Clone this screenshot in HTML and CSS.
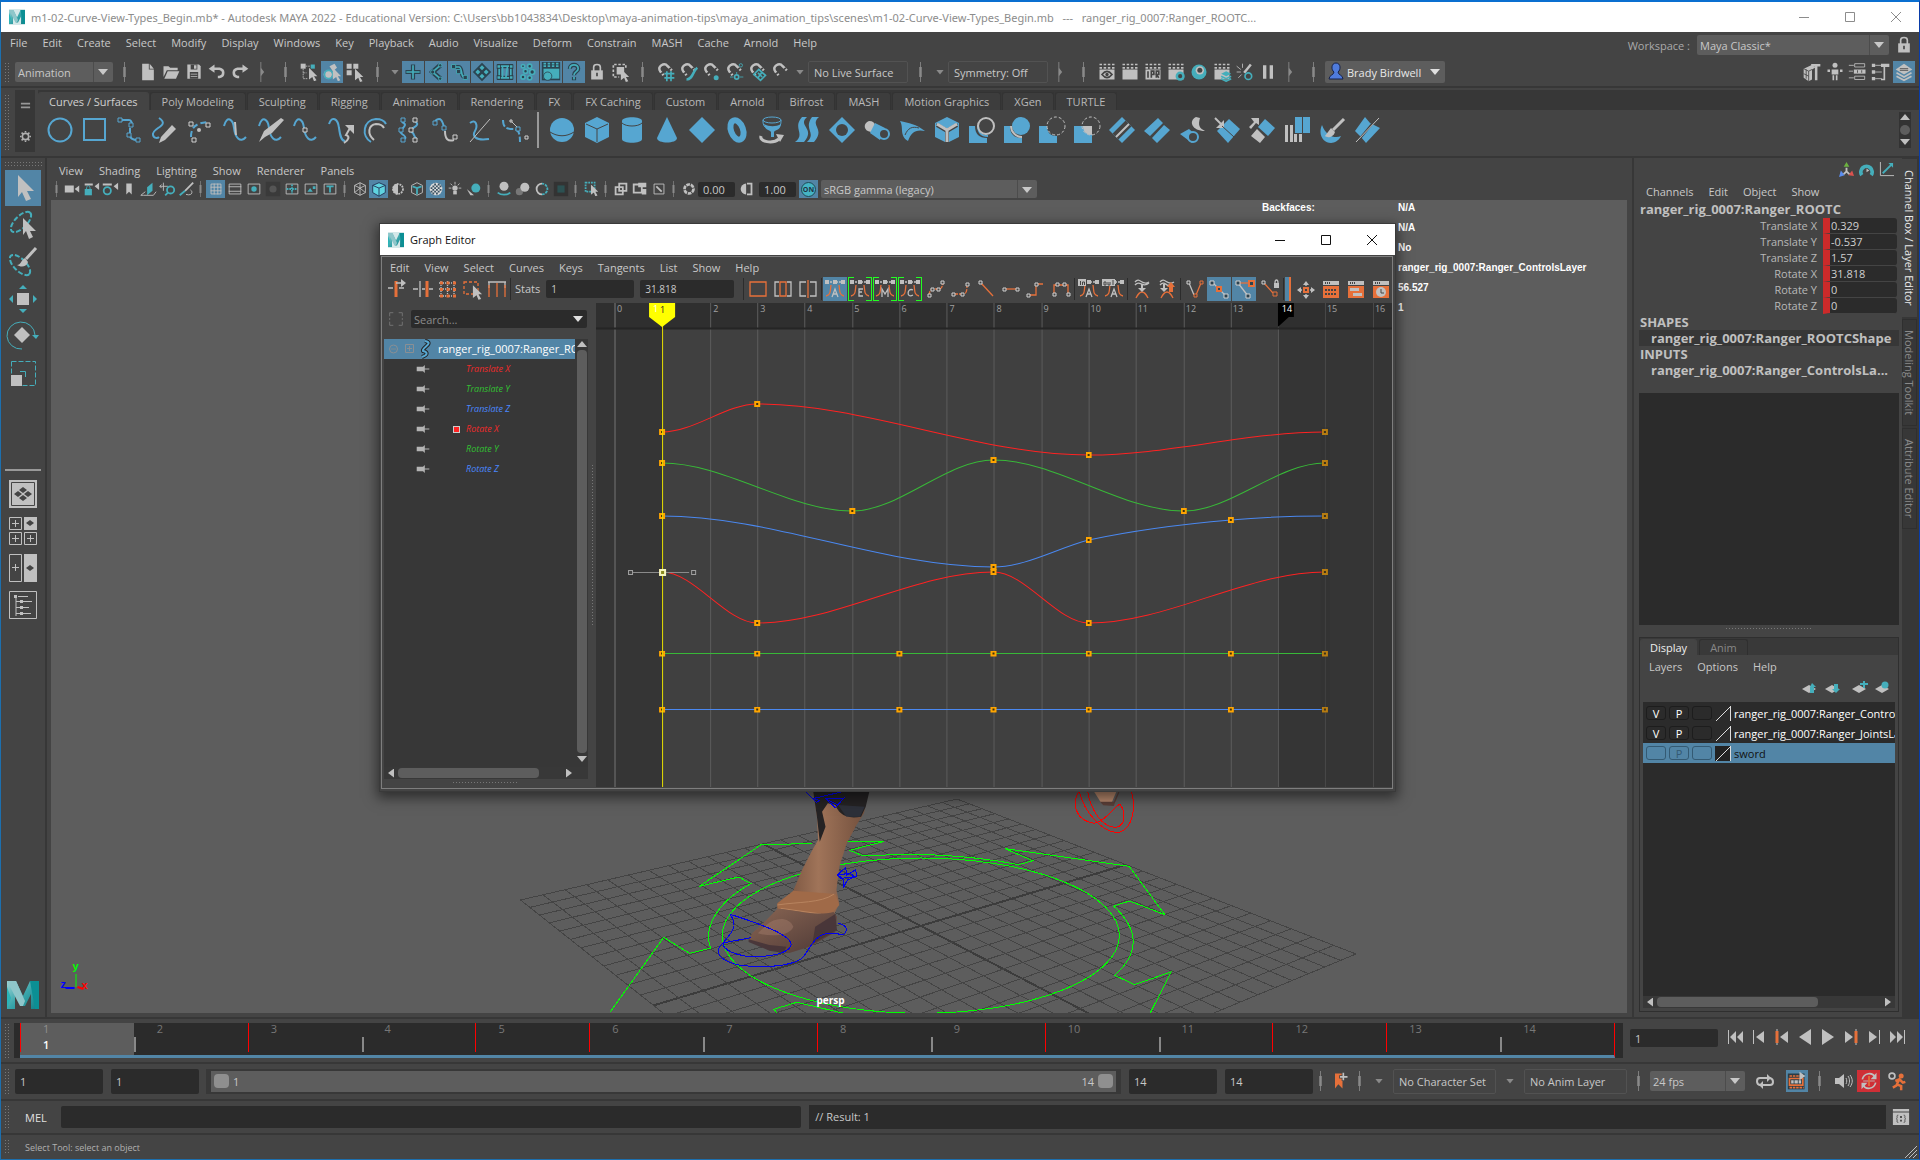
FILE: index.html
```html
<!DOCTYPE html>
<html lang="en">
<head>
<meta charset="utf-8">
<title>Autodesk MAYA 2022</title>
<link rel="stylesheet" href="styles.css">
</head>
<body>
<svg class="sprite" aria-hidden="true">
  <defs>
    <linearGradient id="mg" x1="0" y1="0" x2="1" y2="1"><stop offset="0" stop-color="#9fd3d6"/><stop offset=".5" stop-color="#3aa6ab"/><stop offset="1" stop-color="#0e7f86"/></linearGradient>
    <linearGradient id="skin" x1="0" y1="0" x2="1" y2="0"><stop offset="0" stop-color="#6d4a38"/><stop offset=".45" stop-color="#a07459"/><stop offset="1" stop-color="#6f4d3b"/></linearGradient>
    <linearGradient id="boot" x1="0" y1="0" x2="1" y2="1"><stop offset="0" stop-color="#8a6653"/><stop offset="1" stop-color="#4c3836"/></linearGradient>
    <marker id="key" markerWidth="7" markerHeight="7" refX="3" refY="3" markerUnits="userSpaceOnUse"><path d="M0 0h6v6H0z" fill="#ffa500"/><path d="M2 2h2v2H2z" fill="#3c3010"/></marker>
  </defs>
  <symbol id="maya" viewBox="0 0 32 32"><path d="M0 2h9l7 15 7-15h9v28h-8V15l-6 12h-4L8 15v15H0z" fill="url(#mg)"/><path d="M0 2h9l9 20-2 5h-3z" fill="#8fc6ca"/><path d="M23 2h9v28h-4z" fill="#0b8f94"/><path d="M0 8l4 11-4 11z" fill="#2ab4b8"/></symbol>
  <symbol id="sep" viewBox="0 0 8 24"><path d="M4 0v24" stroke="#8a8a8a"/><path d="M2.500 6h3v12h-3z" fill="#8a8a8a"/></symbol>
  <symbol id="sepa" viewBox="0 0 8 24"><path d="M2 0v24" stroke="#8a8a8a"/><path d="M2 7l4 5-4 5z" fill="#8a8a8a"/></symbol>
  <symbol id="new" viewBox="0 0 24 24"><path class="g" d="M5 2h8v7h6v13H5z"/><path class="g" d="M14 2l5 6h-5z"/></symbol>
  <symbol id="open" viewBox="0 0 24 24"><path class="g" d="M3 5h6l2 2h9v3H7l-4 8z"/><path class="g" d="M8 11h14l-4 9H4z"/></symbol>
  <symbol id="save" viewBox="0 0 24 24"><path class="g" d="M4 3h14l2 2v15H4z"/><path class="k" d="M8 3h8v6H8zM7 12h10v8H7z"/><path class="g" d="M12 4h3v4h-3zM8 14h8v1H8zM8 17h8v1H8z"/></symbol>
  <symbol id="undo" viewBox="0 0 24 24"><path class="gl w3" d="M7 8h8c6 1 6 9 0 10h-2"/><path class="g" d="M2 8l7-5v10z"/></symbol>
  <symbol id="redo" viewBox="0 0 24 24"><path class="gl w3" d="M17 8H9c-6 1-6 9 0 10h2"/><path class="g" d="M22 8l-7-5v10z"/></symbol>
  <symbol id="cur" viewBox="0 0 12 16"><path class="g" d="M1 0l10 10H7l3 5-3 1-2-5-4 3z"/></symbol>
  <symbol id="selh" viewBox="0 0 24 24"><path class="g" d="M2 2h6v6H2z"/><path class="gl th" d="M8 5h6M5 8v12h6M5 13h4" stroke-dasharray="2 1"/><path class="t" d="M14 3h5v5h-5z"/><use href="#cur" x="11" y="7" width="12" height="16"/></symbol>
  <symbol id="selo" viewBox="0 0 24 24"><circle class="g" cx="7" cy="15" r="5"/><path class="g" d="M9 5l6-3 3 5-5 4z"/><circle class="tl" cx="8" cy="15" r="5"/><use href="#cur" x="12" y="7" width="12" height="16"/></symbol>
  <symbol id="selc" viewBox="0 0 24 24"><path class="g" d="M2 2h6v6H2zM10 2h6v6h-6zM2 10h6v6H2z"/><use href="#cur" x="11" y="8" width="12" height="16"/></symbol>
  <symbol id="plus" viewBox="0 0 24 24"><path d="M12 3v18M3 12h18" fill="none" stroke="#2b4350" stroke-width="5"/><path class="tl" d="M12 4v16M4 12h16"/></symbol>
  <symbol id="joint" viewBox="0 0 24 24"><path d="M17 4L8 12l9 8" fill="none" stroke="#2b4350" stroke-width="6"/><path class="tl" d="M17 4L8 12l9 8"/><circle class="tl th dkf" cx="17" cy="4" r="2"/><circle class="tl th dkf" cx="8" cy="12" r="2.500"/><circle class="tl th dkf" cx="17" cy="20" r="2"/></symbol>
  <symbol id="crv" viewBox="0 0 24 24"><path d="M6 6h6c4 0 2 12 6 12" fill="none" stroke="#2b4350" stroke-width="5"/><path class="tl" d="M6 6h6c4 0 2 12 6 12"/><path class="tl th dkf" d="M3 3h5v5H3zM9 9h5v5H9zM17 16h5v5h-5z"/></symbol>
  <symbol id="surf" viewBox="0 0 24 24"><path fill="#2b4350" d="M12 1l11 11-11 11L1 12z"/><path class="t" d="M12 4l3 3-3 3-3-3zM7 9l3 3-3 3-3-3zM17 9l3 3-3 3-3-3zM12 14l3 3-3 3-3-3z"/></symbol>
  <symbol id="latt" viewBox="0 0 24 24"><path d="M5 5h14v14H5z" fill="none" stroke="#2b4350" stroke-width="5"/><path class="tl" d="M5 5h14v14H5zM9 5v14M15 5l-2 14"/><path class="dark" d="M2 3h5v5H2zM17 3h5v5h-5zM2 16h5v5H2zM17 16h5v5h-5z"/><path class="t" d="M3 4h3v3H3zM18 4h3v3h-3zM3 17h3v3H3zM18 17h3v3h-3z"/></symbol>
  <symbol id="dyn" viewBox="0 0 24 24"><g class="tl dkf"><circle cx="6" cy="5" r="2"/><circle cx="14" cy="5" r="2.500"/><circle cx="9" cy="11" r="2.500"/><circle cx="17" cy="12" r="3"/><circle cx="6" cy="18" r="2.500"/><circle cx="14" cy="19" r="2.500"/></g></symbol>
  <symbol id="clap" viewBox="0 0 24 24"><path fill="#2b4350" d="M1 0h22v22H1z"/><path class="t" d="M3 8h19v12H3z"/><path d="M3 5h19M3 2h19" class="tl" stroke-dasharray="3 2"/><circle cx="8" cy="17" r="5" fill="#45aebb" stroke="#2b4350"/></symbol>
  <symbol id="help" viewBox="0 0 24 24"><path d="M7 8c0-6 10-6 10 0 0 4-5 3-5 8M12 18v4" fill="none" stroke="#2b4350" stroke-width="5"/><path class="tl" d="M7 8c0-6 10-6 10 0 0 4-5 3-5 8M12 18v3"/></symbol>
  <symbol id="lock" viewBox="0 0 24 24"><path class="gl" d="M8 11V6c0-4 8-4 8 0v5"/><path class="g" d="M5 10h14v11H5z"/><path class="k" d="M11 13h2v4h-2z"/></symbol>
  <symbol id="box" viewBox="0 0 24 24"><path class="g" d="M8 6h9v9H8z"/><path class="gl" d="M5 3h14v4M4 4v14h7" stroke-dasharray="3 2"/><use href="#cur" x="12" y="8" width="12" height="16"/></symbol>
  <symbol id="mag" viewBox="0 0 24 24"><path class="gl w3" d="M9 16L5 11c-4-6 5-11 9-6l5 5"/><path class="kl" d="M5 15l4-3M14 10l4-3"/></symbol>
  <symbol id="mgrid" viewBox="0 0 24 24"><use href="#mag"/><path class="tl" d="M13 11v12M18 11v12M10 14h12M10 19h12"/></symbol>
  <symbol id="mcrv" viewBox="0 0 24 24"><use href="#mag"/><path class="tl w3" d="M9 21c8 0 7-10 13-14"/></symbol>
  <symbol id="mpt" viewBox="0 0 24 24"><use href="#mag"/><circle class="t" cx="17" cy="19" r="3"/></symbol>
  <symbol id="mproj" viewBox="0 0 24 24"><use href="#mag"/><circle class="tl" cx="14" cy="18" r="2.500"/><circle class="tl th" cx="19" cy="4" r="2"/><path class="tl th" d="M6 18h4M18 18h4M14 12v3"/></symbol>
  <symbol id="mpl" viewBox="0 0 24 24"><use href="#mag"/><path class="tl" d="M13 9l8 7-6 6-8-7zM12 13l5 5M17 12l-5 7"/></symbol>
  <symbol id="film" viewBox="0 0 24 24"><path class="g" d="M3 9h18v12H3z"/><path class="gl" d="M3 7h18M3 3h18" stroke-dasharray="3 2"/></symbol>
  <symbol id="rview" viewBox="0 0 24 24"><use href="#film"/><path class="kl" d="M6 15c4-5 8-5 12 0-4 5-8 5-12 0z"/><circle class="k" cx="12" cy="15" r="2"/></symbol>
  <symbol id="rgear" viewBox="0 0 24 24"><use href="#film"/><circle class="tl w3 kf" cx="17" cy="17" r="4"/></symbol>
  <symbol id="ripr" viewBox="0 0 24 24"><use href="#film"/><path class="kl" d="M6 11v8M10 19v-8h3v4h-3M16 19v-8h3v4h-3l3 4"/></symbol>
  <symbol id="hyp" viewBox="0 0 24 24"><circle class="t" cx="12" cy="12" r="9"/><circle class="g" cx="13" cy="10" r="5"/><circle class="k" cx="13" cy="10" r="3"/></symbol>
  <symbol id="rset" viewBox="0 0 24 24"><use href="#film"/><path class="t" d="M17 11l6 3-6 3-6-3z"/><path class="tl" d="M11 17l6 3 6-3M11 20l6 3 6-3"/></symbol>
  <symbol id="rlt" viewBox="0 0 24 24"><path class="gl w3" d="M11 13l8-10"/><path class="gl th" d="M2 5l5 4M9 2v5M2 12h5M4 19l4-4"/><circle class="tl" cx="16" cy="17" r="4"/></symbol>
  <symbol id="pause" viewBox="0 0 24 24"><path class="g" d="M6 4h4v16H6zM14 4h4v16h-4z"/></symbol>
  <symbol id="modk" viewBox="0 0 24 24"><path class="g" d="M2 8l9-4 6 2-5 3v12l-4 2-6-4z"/><path class="gl w3" d="M11 4h11M17 5v17"/><path class="kl th" d="M2 8l6 3v12M5 9v11M2 14l6 3M8 11l4-2"/></symbol>
  <symbol id="human" viewBox="0 0 24 24"><circle class="g" cx="12" cy="4" r="3"/><path class="g" d="M8 9h8v6H8zM3 9h3v3H3zM18 9h3v3h-3z"/><path class="gl" d="M10 16v6M14 16v6"/></symbol>
  <symbol id="aedit" viewBox="0 0 24 24"><path class="gl th" d="M1 4h6M1 11h5M1 19h6M8 2h12v4H8zM8 17h12v4H8z"/><path class="g" d="M7 9h14v5H7z"/><path class="k" d="M11 10h1v3h-1zM16 10h1v3h-1z"/></symbol>
  <symbol id="tset" viewBox="0 0 24 24"><path class="gl th" d="M5 4h8M5 12h8M5 20h8"/><path class="gl" d="M16 5v16h-4"/><path class="g" d="M1 2h4v4H1zM1 10h4v4H1zM1 18h4v4H1zM12 2h10v4H12z"/></symbol>
  <symbol id="layers" viewBox="0 0 24 24"><path class="gl" d="M3 17l9 5 9-5M3 13l9 5 9-5"/><path class="g" d="M12 2l10 7-10 6L2 9z"/><path class="kl th" d="M7 8h10M7 10h10"/></symbol>
  <symbol id="user" viewBox="0 0 16 20"><path d="M8 1c5 0 5 7 2 9 0 3 5 3 5 7H1c0-4 5-4 5-7-3-2-3-9 2-9z" fill="#4f7bdc" stroke="#16224a"/></symbol>
  <!-- shelf -->
  <symbol id="s-circ" viewBox="0 0 28 28"><circle class="bl" cx="14" cy="14" r="11.500"/></symbol>
  <symbol id="s-sq" viewBox="0 0 28 28"><path class="bl" d="M3 3h21v21H3z"/></symbol>
  <symbol id="s-cv" viewBox="0 0 28 28"><path class="bl" d="M5 4h8c2 0 3 3 3 6M14 12v7c0 4 4 5 8 5"/><path class="pt" d="M2 2h4v4H2zM13 7h4v4h-4zM11 17h4v4h-4zM20 22h4v4h-4z"/></symbol>
  <symbol id="s-pen" viewBox="0 0 28 28"><path class="bl" d="M8 2c12 8-8 10-6 17 1 4 5 3 6 2"/><path class="g" d="M21 9l4 4-11 11-6 3 2-6z"/></symbol>
  <symbol id="s-arc" viewBox="0 0 28 28"><path class="bl" d="M5 21C5 12 9 7 22 6" stroke-dasharray="6 3"/><path class="pg" d="M3 6h4v4H3zM20 7h4v4h-4zM6 22h4v4H6z"/><circle class="g" cx="13" cy="14" r="2"/></symbol>
  <symbol id="s-at" viewBox="0 0 28 28"><path class="bl" d="M3 10C6-1 12 3 13 12s6 16 12 9"/><path class="gl" d="M14 6l1 13"/></symbol>
  <symbol id="s-det" viewBox="0 0 28 28"><path class="bl" d="M3 10C6-1 12 3 13 12s6 16 12 9"/><path class="g" d="M25 2l3 2-12 13-7 4-6 5 5-11z"/></symbol>
  <symbol id="s-ins" viewBox="0 0 28 28"><path class="bl" d="M3 10C6-1 12 3 13 12s6 16 12 9"/><path class="pg" d="M12 12h4v4h-4z"/></symbol>
  <symbol id="s-ext" viewBox="0 0 28 28"><path class="bl" d="M3 8C6-1 12 3 13 12c1 7 2 13 6 13"/><path class="gl" d="M18 27c5-3 6-7 2-8l4-7"/><path class="g" d="M19 9h9v9z"/></symbol>
  <symbol id="s-off" viewBox="0 0 28 28"><path class="bl" d="M10 26C0 20 2 4 15 3c6 0 9 3 10 5"/><path class="gl" d="M13 24C6 18 7 9 15 8c5 0 7 2 8 4"/></symbol>
  <symbol id="s-reb" viewBox="0 0 28 28"><path class="bl" d="M6 6c9 4-6 8 0 12s3 5 0 6M17 4c13 7-9 8 0 13 2 4 2 5 4 6"/><path class="pt" d="M5 2h4v4H5zM3 12h4v4H3zM5 22h4v4H5z"/><path class="pg" d="M17 2h4v4h-4zM13 12h4v4h-4zM17 22h4v4h-4z"/></symbol>
  <symbol id="s-add" viewBox="0 0 28 28"><path class="bl" d="M4 5c7-6 8 3 10 9"/><path class="gl" d="M14 15c0 8 3 11 9 9"/><path class="pt" d="M2 5h4v4H2zM11 10h4v4h-4z"/><path class="pg" d="M22 19h4v4h-4z"/></symbol>
  <symbol id="s-cut" viewBox="0 0 28 28"><path class="bl" d="M4 7c6-5 8 3 5 8s0 10 14 8"/><path class="gl th" d="M24 3L4 26"/></symbol>
  <symbol id="s-bez" viewBox="0 0 28 28"><path class="bl" d="M2 4c0 8 4 9 11 9 5 0 6 6 6 13" stroke-dasharray="7 2"/><path class="pt" d="M15 11h4v4h-4z"/><path class="gl th" d="M11 6l5 5"/><path class="pg" d="M9 4h2v2H9zM24 20h3v3h-3z"/></symbol>
  <symbol id="s-sph" viewBox="0 0 28 28"><circle class="b" cx="14" cy="14" r="12"/><path class="kl th" d="M2 16c8 5 16 5 24 0"/></symbol>
  <symbol id="s-cube" viewBox="0 0 28 28"><path class="b" d="M14 1l12 6v14l-12 6-12-6V7z"/><path class="kl th" d="M3 8l11 5 11-5M14 13v13"/></symbol>
  <symbol id="s-cyl" viewBox="0 0 28 28"><path class="b" d="M4 5c0-5 20-5 20 0v18c0 5-20 5-20 0z"/><path class="kl th" d="M4 7c4 4 16 4 20 0"/></symbol>
  <symbol id="s-cone" viewBox="0 0 28 28"><path class="b" d="M14 1l10 21c0 6-20 6-20 0z"/></symbol>
  <symbol id="s-pl" viewBox="0 0 28 28"><path class="b" d="M14 1l13 13-13 13L1 14z"/></symbol>
  <symbol id="s-tor" viewBox="0 0 28 28"><ellipse cx="14" cy="14" rx="6" ry="10" transform="rotate(-20 14 14)" fill="none" stroke="#56a6d1" stroke-width="6"/></symbol>
  <symbol id="s-rev" viewBox="0 0 28 28"><path class="b" d="M6 8c1 7 5 5 7 8v5h3v-5c2-3 6-1 7-8-5 3-12 3-17 0z"/><ellipse cx="14" cy="4" rx="9" ry="3" fill="none" stroke="#56a6d1"/><path d="M5 4c0 3 0 5 2 7M23 4c0 3 0 5-2 7" fill="none" stroke="#56a6d1"/><path class="gl w3" d="M3 20c-2 6 12 8 18 3"/><path class="g" d="M18 18l8 1-4 7z"/></symbol>
  <symbol id="s-loft" viewBox="0 0 28 28"><path class="b" d="M9 1h5c-10 9 9 11-3 25H2C13 18-1 12 9 1zM19 1h7c-10 9 7 11-5 25h-7c10-9-4-13 5-25z"/></symbol>
  <symbol id="s-plan" viewBox="0 0 28 28"><path class="b" d="M14 1l13 13-13 13L1 14z"/><circle class="k" cx="14" cy="14" r="6"/></symbol>
  <symbol id="s-extr" viewBox="0 0 28 28"><path class="g" d="M6 5c8 0 7 7 2 11C0 15 0 7 6 5z"/><path class="b" d="M12 7l10 5-5 12-10-7z"/><circle class="bl kf" cx="21" cy="18" r="5"/></symbol>
  <symbol id="s-bir" viewBox="0 0 28 28"><path class="b" d="M2 5c9 2 16 3 25 10-10-2-14 2-17 10C1 20 6 11 2 5z"/><path class="kl th" d="M7 19c3-7 7-9 14-7"/></symbol>
  <symbol id="s-bnd" viewBox="0 0 28 28"><use href="#s-cube"/><path class="kl w4" d="M4 9l10 6 10-6M14 14v13"/><path class="gl w3" d="M4 8l10 6 10-6M14 14v12"/></symbol>
  <symbol id="s-prj" viewBox="0 0 28 28"><path class="b" d="M1 10h6c0 8 4 12 12 12v5H1z"/><path class="bl" d="M10 9c0 8 3 11 10 11"/><circle class="gl" cx="18" cy="10" r="8"/></symbol>
  <symbol id="s-int" viewBox="0 0 28 28"><path class="b" d="M1 10h6c0 8 4 12 12 12v5H1z"/><circle class="b" cx="18" cy="10" r="9"/><path class="gl" d="M8 10c0 6 5 11 11 11"/></symbol>
  <symbol id="s-trm" viewBox="0 0 28 28"><path class="b" d="M1 10h8c0 7 4 10 10 10v7H1z"/><circle class="gl th" cx="18" cy="10" r="9" stroke-dasharray="3 2"/></symbol>
  <symbol id="s-unt" viewBox="0 0 28 28"><path class="b" d="M1 10h18v17H1z"/><path class="g" d="M10 10h9v9c-6 0-9-4-9-9z"/><circle class="gl th" cx="18" cy="10" r="9" stroke-dasharray="3 2"/></symbol>
  <symbol id="s-sat" viewBox="0 0 28 28"><path class="b" d="M14 1l13 13-13 13L1 14z"/><path class="kl w4" d="M19 6L6 19M22 9L9 22"/><path class="gl" d="M21 8L8 21"/></symbol>
  <symbol id="s-sde" viewBox="0 0 28 28"><path class="b" d="M15 2l5 5L7 20l-6-5zM21 9l6 5-13 13-5-5z"/></symbol>
  <symbol id="s-oc" viewBox="0 0 28 28"><path class="g" d="M18 1c-8 4-4 14 9 14-6-3-7-6-5-13z"/><path class="b" d="M2 18l9-5 8 7-5 7z"/><circle class="bl kf" cx="15" cy="21" r="5"/></symbol>
  <symbol id="s-ext2" viewBox="0 0 28 28"><path class="b" d="M16 3l11 10-12 14L4 15z"/><path class="gl" d="M2 2l7 7"/><path class="g" d="M11 4v8H3z"/><path class="kl th" d="M9 10l12 11"/></symbol>
  <symbol id="s-sins" viewBox="0 0 28 28"><path class="b" d="M17 3l10 9-7 8-10-9z"/><path class="g" d="M9 13l8 8-5 6-9-7zM11 2v7l-3-2-5 6-2-2 5-5-3-4z"/></symbol>
  <symbol id="s-strip" viewBox="0 0 28 28"><path class="b" d="M12 1h7v16h-7zM20 1h7v16h-7z"/><path class="g" d="M2 9h3v17H2zM7 9h3v17H7zM11 18h3v8h-3zM16 18h3v8h-3z"/></symbol>
  <symbol id="s-scl" viewBox="0 0 28 28"><path class="b" d="M4 9c-7 16 12 25 19 11-6 3-15 0-19-11z"/><path class="gl w3" d="M26 3L15 14"/><path class="g" d="M13 12l4 4c-2 6-8 6-10 4z"/></symbol>
  <symbol id="s-sed" viewBox="0 0 28 28"><path class="b" d="M12 1l5 6 10 5-14 15-5-6-6-6z"/><path class="kl" d="M24 2L4 26"/><path class="gl th" d="M26 2L3 26"/></symbol>
  <!-- view panel -->
  <symbol id="p-cam" viewBox="0 0 20 20"><path class="g" d="M2 6h10v8H2zM13 10l5-4v8z"/></symbol>
  <symbol id="p-caml" viewBox="0 0 20 20"><path class="g" d="M3 4h9v2H3zM14 7l5-4v8z"/><path class="t" d="M3 10h8v7H3z"/><path class="tl th" d="M5 10c0-5 4-5 4 0"/></symbol>
  <symbol id="p-camg" viewBox="0 0 20 20"><path class="g" d="M2 4h10v2H2zM14 7l5-4v8z"/><circle class="tl" cx="7" cy="12" r="4"/></symbol>
  <symbol id="p-bm" viewBox="0 0 20 20"><path class="g" d="M7 4h6v12l-3-3-3 3z"/></symbol>
  <symbol id="p-img" viewBox="0 0 20 20"><path class="t" d="M9 8l6-5v9l-6 5z"/><path class="gl th" d="M2 17l5-4M5 17h11l3-4M2 17h3"/></symbol>
  <symbol id="p-pz" viewBox="0 0 20 20"><path class="gl th" d="M2 7h9M6 3v9M2 7l2-2M2 7l2 2"/><circle class="tl" cx="14" cy="11" r="4"/><path class="tl" d="M11 14l-3 3"/></symbol>
  <symbol id="p-gp" viewBox="0 0 20 20"><path class="gl" d="M18 3L9 12"/><path class="tl" d="M9 12l-6 5"/><path class="gl th" d="M10 16c7 2 8-3 5-5"/></symbol>
  <symbol id="p-grid" viewBox="0 0 20 20"><path class="gl th" d="M4.500 4.500h11v11h-11zM8 4v12M12 4v12M4 8h12M4 12h12"/></symbol>
  <symbol id="p-fg" viewBox="0 0 20 20"><path class="gl th" d="M3.500 4.500h13v11h-13zM3 7.500h14M3 12.500h14"/></symbol>
  <symbol id="p-rg" viewBox="0 0 20 20"><path class="gl th" d="M3.500 4.500h13v11h-13z"/><circle class="t" cx="10" cy="10" r="3"/></symbol>
  <symbol id="p-gm" viewBox="0 0 20 20"><path fill="#3a3a3a" d="M2 2h16v16H2z"/><circle cx="10" cy="10" r="4" fill="#555"/></symbol>
  <symbol id="p-fc" viewBox="0 0 20 20"><path class="gl th" d="M3.500 4.500h13v11h-13z"/><path class="tl" d="M10 5v10M4 10h12" stroke-dasharray="2 1"/></symbol>
  <symbol id="p-sa" viewBox="0 0 20 20"><path class="gl th" d="M3.500 4.500h13v11h-13z"/><path class="t" d="M6 13l3-4 3 4zM12 7h3v3h-3z"/></symbol>
  <symbol id="p-st" viewBox="0 0 20 20"><path class="gl th" d="M3.500 4.500h13v11h-13z"/><path class="tl" d="M6 7h8M10 7v7"/></symbol>
  <symbol id="p-wf" viewBox="0 0 20 20"><path class="gl th" d="M10 3l6 3v8l-6 3-6-3V6zM4 6l6 3 6-3M10 9v8M10 3v6M4 14l6-5 6 5"/></symbol>
  <symbol id="p-sh" viewBox="0 0 20 20"><path fill="#5fd3e0" stroke="#235" d="M10 3l7 3v8l-7 4-7-4V6z"/><path stroke="#235" fill="none" d="M3 6l7 3 7-3M10 9v9"/></symbol>
  <symbol id="p-half" viewBox="0 0 20 20"><path class="g" d="M10 4a6 6 0 0 0 0 12z"/><circle class="gl" cx="10" cy="10" r="5.500" stroke-dasharray="2 1"/></symbol>
  <symbol id="p-tx" viewBox="0 0 20 20"><path class="gl th" d="M10 3l6 3v8l-6 3-6-3V6z"/><path class="tl" d="M5 7l5 2 5-2M10 9v7"/></symbol>
  <symbol id="p-chk" viewBox="0 0 20 20"><circle cx="10" cy="10" r="7" fill="#dcdcdc"/><path d="M8 4h2v2H8zM12 4h2v2h-2zM6 6h2v2H6zM10 6h2v2h-2zM14 6h2v2h-2zM4 8h2v2H4zM8 8h2v2H8zM12 8h2v2h-2zM6 10h2v2H6zM10 10h2v2h-2zM14 10h2v2h-2zM4 12h2v2H4zM8 12h2v2H8zM12 12h2v2h-2zM6 14h2v2H6zM10 14h2v2h-2z" fill="#3a5262"/></symbol>
  <symbol id="p-lt" viewBox="0 0 20 20"><circle class="g" cx="10" cy="9" r="3"/><path class="g" d="M8 12h4v4H8z"/><path class="gl th" d="M10 2v3M3 9h3M14 9h3M5 4l2 2M15 4l-2 2"/></symbol>
  <symbol id="p-shd" viewBox="0 0 20 20"><path class="g" d="M2 10l8 7H6z"/><circle class="t" cx="12" cy="9" r="5"/></symbol>
  <symbol id="p-ao" viewBox="0 0 20 20"><circle class="g" cx="10" cy="7" r="5"/><path class="tl" d="M3 14c4 3 10 3 14 0"/></symbol>
  <symbol id="p-mb" viewBox="0 0 20 20"><circle cx="6" cy="13" r="4" fill="#777"/><circle class="g" cx="12" cy="8" r="5"/></symbol>
  <symbol id="p-aa" viewBox="0 0 20 20"><path class="gl" d="M10 4a6 6 0 0 0 0 12"/><path class="tl" d="M10 16a6 6 0 0 0 0-12" stroke-dasharray="3 1"/></symbol>
  <symbol id="p-dof" viewBox="0 0 20 20"><path fill="#333" d="M2 2h16v16H2z"/><path fill="#2c5152" d="M6 6h8v8H6z"/></symbol>
  <symbol id="p-iso" viewBox="0 0 20 20"><path class="tl" d="M4 3h10v10H4z" stroke-dasharray="2 1"/><use href="#cur" x="9" y="5" width="10" height="13"/></symbol>
  <symbol id="p-c1" viewBox="0 0 20 20"><path class="gl" d="M4 8h8v8H4zM8 4h8v8H8z"/></symbol>
  <symbol id="p-c2" viewBox="0 0 20 20"><path class="gl" d="M3 5h9v9H3z"/><path class="g" d="M8 3h9v5H8zM12 10h5v6h-5z"/></symbol>
  <symbol id="p-c3" viewBox="0 0 20 20"><path class="gl th" d="M4.500 4.500h11v11h-11z"/><path class="gl" d="M7 7l6 6"/></symbol>
  <symbol id="p-ap" viewBox="0 0 20 20"><circle cx="10" cy="10" r="5" class="gl w3" stroke-dasharray="4 1"/></symbol>
  <symbol id="p-con" viewBox="0 0 20 20"><path class="g" d="M9 4a6 6 0 0 0 0 12z"/><path class="gl" d="M10 4h5v12h-5"/></symbol>
  <!-- tool box -->
  <symbol id="t-sel" viewBox="0 0 36 36"><path class="g" d="M13 5l16 16h-7l4 8-5 2-4-9-4 5z"/></symbol>
  <symbol id="t-las" viewBox="0 0 36 36"><ellipse class="tl" cx="16" cy="15" rx="13" ry="6" transform="rotate(-45 16 15)" stroke-dasharray="5 2"/><path class="g" d="M18 11l13 13h-6l3 6-4 2-3-8-3 4z"/></symbol>
  <symbol id="t-pnt" viewBox="0 0 36 36"><ellipse class="tl" cx="15" cy="21" rx="13" ry="6" transform="rotate(45 15 21)" stroke-dasharray="5 2"/><path class="gl w3" d="M31 4L21 15"/><path class="g" d="M20 14l3 4c-2 6-8 5-11 3 4 0 4-5 8-7z"/></symbol>
  <symbol id="t-mov" viewBox="0 0 36 36"><path class="g" d="M12 12h12v12H12z"/><path class="t" d="M18 4l4 4h-8zM18 32l4-4h-8zM4 18l4-4v8zM32 18l-4-4v8z"/></symbol>
  <symbol id="t-rot" viewBox="0 0 36 36"><path class="g" d="M17 9l8 8-8 8-8-8z"/><path fill="none" stroke="#45aebb" d="M17 31A14 13.500 0 1 1 30 17"/><path class="t" d="M27 17h7l-3 4z"/></symbol>
  <symbol id="t-scl" viewBox="0 0 36 36"><path fill="none" stroke="#45aebb" d="M6.500 6.500h24v24h-24z" stroke-dasharray="5 2"/><path class="g" d="M6 20h11v11H6z"/><path fill="none" stroke="#45aebb" d="M15 16.500h5.500V22"/></symbol>
  <symbol id="l-1" viewBox="0 0 28 28"><path class="g" d="M0 0h28v28H0z"/><path fill="none" stroke="#444" d="M2.500 2.500h23v23h-23z"/><path class="k" d="M14 7l4 3-4 3-4-3zM14 15l4 3-4 3-4-3zM9 11l4 3-4 3-4-3zM19 11l4 3-4 3-4-3z"/></symbol>
  <symbol id="l-2" viewBox="0 0 28 28"><path class="gl th" d="M.5.500h12v12H.500zM.5 15.500h12v12H.500zM15.500 15.500h12v12h-12zM6.500 3v7M3 6.500h7M6.500 18v7M3 21.500h7M21.500 18v7M18 21.500h7"/><path class="g" d="M15 0h13v13H15z"/><path class="k" d="M21 3l4 3-4 3-4-3z"/></symbol>
  <symbol id="l-3" viewBox="0 0 28 28"><path class="gl th" d="M.5.500h12v27H.500zM6.500 10v7M3 13.500h7"/><path class="g" d="M15 0h13v28H15z"/><path class="k" d="M21 11l4 3-4 3-4-3z"/></symbol>
  <symbol id="l-4" viewBox="0 0 28 28"><path class="gl th" d="M.5.500h27v27H.500zM9 5.500h10M7 6v19M7 10.500h16M7 16.500h13M7 22.500h15"/><path class="g" d="M5 4h3v3H5zM11 9h3v3h-3zM11 15h3v3h-3zM11 21h3v3h-3z"/></symbol>
  <!-- graph editor -->
  <symbol id="g-ins" viewBox="0 0 24 24"><path class="ol w3" d="M11 4v16"/><path class="gl" d="M3 11h5M14 11h5M11 6h7"/><path class="g" d="M16 2l5 4-5 4z"/></symbol>
  <symbol id="g-mov" viewBox="0 0 24 24"><path class="ol w3" d="M17 4v16"/><path class="gl" d="M10 4v16M3 12h5M12 12h3M19 12h4"/></symbol>
  <symbol id="g-lat" viewBox="0 0 24 24"><path class="gl th" d="M6 4v16M12.500 4v16M19 4v16M4 6h17M4 12h17M4 19h17" stroke-dasharray="1 1"/><path class="ol w3" d="M5 6h16M5 12.500h16M5 19h16" stroke-dasharray="3 3.500"/></symbol>
  <symbol id="g-reg" viewBox="0 0 24 24"><path class="ol" d="M4 5h14v12H4z" stroke-dasharray="3 2"/><use href="#cur" x="12" y="8" width="11" height="15"/></symbol>
  <symbol id="g-ret" viewBox="0 0 24 24"><path class="gl" d="M3 5h18M4 5v6M20 5v6"/><path class="ol" d="M4 8v12M12 6v14M20 8v12"/></symbol>
  <symbol id="g-fa" viewBox="0 0 24 24"><path class="ol" d="M4 5h16v14H4z"/></symbol>
  <symbol id="g-fp" viewBox="0 0 24 24"><path class="gl" d="M8 5H4v14h4M16 5h4v14h-4"/><path class="ol" d="M9 5h6v14H9z"/></symbol>
  <symbol id="g-cv" viewBox="0 0 24 24"><path class="gl" d="M10 5H4v14h6M14 5h6v14h-6"/><path class="ol" d="M12 3v18"/></symbol>
  <symbol id="g-tan" viewBox="0 0 24 24"><path class="gl th" d="M4 5h16" stroke-dasharray="2 1"/><path class="g" d="M2 3h4v4H2zM10 3h4v4h-4zM18 3h4v4h-4z"/><path class="ol" d="M8 8c-1 6 0 10-5 11M16 8c1 6 0 10 5 11"/></symbol>
  <symbol id="g-a" viewBox="0 0 24 24"><use href="#g-tan"/><path class="gl" d="M9 20l3-8 3 8M10 17h4"/></symbol>
  <symbol id="g-e" viewBox="0 0 24 24"><use href="#g-tan"/><path class="gl" d="M15 12h-4v7h4M11 15h3"/></symbol>
  <symbol id="g-m" viewBox="0 0 24 24"><use href="#g-tan"/><path class="gl" d="M9 20v-8l3 5 3-5v8"/></symbol>
  <symbol id="g-c" viewBox="0 0 24 24"><use href="#g-tan"/><path class="gl" d="M15 13c-6-3-7 9 0 5"/></symbol>
  <symbol id="g-t1" viewBox="0 0 24 24"><path class="ol" d="M5 18c1-6 3-7 7-6s6 0 7-6" stroke-dasharray="4 1"/><path class="pg" d="M4 17h3v3H4zM7 11h3v3H7zM13 11h3v3h-3zM17 4h3v3h-3z"/></symbol>
  <symbol id="g-t2" viewBox="0 0 24 24"><path class="ol" d="M4 17h10c4 0 4-4 4-10" stroke-dasharray="5 1"/><path class="pg" d="M3 16h3v3H3zM12 16h3v3h-3zM17 6h3v3h-3z"/></symbol>
  <symbol id="g-t3" viewBox="0 0 24 24"><path class="ol" d="M7 6l12 13"/><path class="pg" d="M5 4h3v3H5z"/></symbol>
  <symbol id="g-t4" viewBox="0 0 24 24"><path class="ol" d="M6 12h12"/><path class="pg" d="M4 11h3v3H4zM17 11h3v3h-3z"/></symbol>
  <symbol id="g-t5" viewBox="0 0 24 24"><path class="ol" d="M5 18h7V7h7"/><path class="pg" d="M3 17h3v3H3zM11 6h3v3h-3z"/></symbol>
  <symbol id="g-t6" viewBox="0 0 24 24"><path class="ol" d="M5 17V8h14v9"/><path class="pg" d="M4 16h3v3H4zM7 6h3v3H7zM14 6h3v3h-3zM18 16h3v3h-3z"/></symbol>
  <symbol id="g-in" viewBox="0 0 24 24"><use href="#g-a"/><path class="g" d="M1 2h8v7H1z"/><path class="kl th" d="M3.500 4v4M5.500 8V5h2v3"/></symbol>
  <symbol id="g-out" viewBox="0 0 24 24"><use href="#g-a"/><path class="g" d="M0 2h13v7H0z"/><path class="kl th" d="M2 5h2v3H2zM6 5v3h2V5M11 3v5"/></symbol>
  <symbol id="g-b1" viewBox="0 0 24 24"><path class="gl th" d="M5 5c5-6 7 5 14 0M5 8c5-6 7 4 14-2"/><path class="ol" d="M6 21c4-8 8-8 12 0"/><path class="g" d="M11 7h2v4h3l-4 4-4-4h3z"/></symbol>
  <symbol id="g-b2" viewBox="0 0 24 24"><path class="gl th" d="M5 5c5-6 7 5 14 0M5 8c5-6 7 4 10-1"/><path class="ol" d="M6 21c4-8 8-8 12 0"/><path class="g" d="M8 7h2v4h3l-4 4-4-4h3z"/><path class="o" d="M16 5l4 5h-2v5h-4v-5h-2z"/></symbol>
  <symbol id="g-bt" viewBox="0 0 24 24"><path class="gl" d="M6 6l5 12"/><path class="ol" d="M18 6l-5 12"/><path class="pg" d="M4 4h3v3H4z"/><path class="po th" d="M17 4h3v3h-3zM11 17h3v3h-3z"/></symbol>
  <symbol id="g-ut" viewBox="0 0 24 24"><path class="gl" d="M5 5l14 14"/><path class="pg dkf" d="M3 4h4v4H3zM17 17h4v4h-4z"/><path class="po dkf" d="M10 10h4v4h-4z"/></symbol>
  <symbol id="g-fw" viewBox="0 0 24 24"><path class="ol" d="M6 6h12"/><path class="gl" d="M6 6l10 13"/><path class="pg dkf" d="M4 4h4v4H4zM14 17h4v4h-4z"/><path class="po dkf" d="M17 4h5v5h-5z"/></symbol>
  <symbol id="g-lk" viewBox="0 0 24 24"><path class="ol" d="M6 6l9 10"/><path class="pg" d="M4 4h3v3H4z"/><path class="po th" d="M15 15h4v4h-4z"/><path class="g" d="M16 6h5v5h-5z"/><path class="gl th" d="M17 6c0-4 3-4 3 0"/></symbol>
  <symbol id="g-pan" viewBox="0 0 24 24"><path class="g" d="M12 4l3 4h-6zM12 22l3-4h-6zM3 13l4-3v6zM21 13l-4-3v6z"/><path class="gl" d="M12 7v2M12 17v2M6 13h2M16 13h2"/><path class="po" d="M10 11h4v4h-4z"/></symbol>
  <symbol id="g-w" viewBox="0 0 24 24"><path class="g" d="M4 4h16v4H4z"/><path class="o" d="M4 9h16v12H4z"/><path class="kl" d="M6 6h6" stroke-dasharray="1 1"/></symbol>
  <symbol id="g-w1" viewBox="0 0 24 24"><use href="#g-w"/><path class="kl" d="M6 13h12M6 17h12" stroke-dasharray="2 1"/></symbol>
  <symbol id="g-w2" viewBox="0 0 24 24"><use href="#g-w"/><path class="g" d="M6 11h9v3H6zM9 16h9v3H9z"/></symbol>
  <symbol id="g-w3" viewBox="0 0 24 24"><use href="#g-w"/><circle class="g" cx="12" cy="15" r="5"/><path class="kl th" d="M12 12v4h3"/></symbol>
  <symbol id="g-x" viewBox="0 0 20 20"><path fill="none" stroke="#777" d="M7 3H3v4M13 3h4v4M7 17H3v-4M13 17h4v-4M3 9v2M17 9v2"/></symbol>
  <symbol id="pin" viewBox="0 0 14 10"><path fill="#b4b4b4" d="M0 2h7l2-2v4h5v1H9v4L7 7H0z"/></symbol>
  <!-- transport -->
  <symbol id="k1" viewBox="0 0 18 18"><path class="gl th" d="M1.500 2v14"/><path class="g" d="M9 3v12L3 9zM16 3v12L10 9z"/></symbol>
  <symbol id="k2" viewBox="0 0 18 18"><path class="gl th" d="M3.500 2v14"/><path class="g" d="M14 3v12L6 9z"/></symbol>
  <symbol id="k3" viewBox="0 0 18 18"><path class="ol w3" d="M4 3v12"/><path class="gl th" d="M4 1v16" stroke-dasharray="2 12"/><path class="g" d="M15 3v12L7 9z"/></symbol>
  <symbol id="k4" viewBox="0 0 18 18"><path class="g" d="M15 1v16L3 9z"/></symbol>
  <symbol id="loop" viewBox="0 0 20 20"><path class="gl" d="M6 14h-1c-4-1-4-7 0-7h9M14 7h1c4 1 4 7 0 7H7"/><path class="g" d="M12 3l4 4-4 4zM8 10l-4 4 4 4z"/></symbol>
  <symbol id="pb" viewBox="0 0 24 24"><path class="dark" d="M1 3h20v19H1z"/><path class="ol" d="M3 6h17M3 20h17" stroke-dasharray="3 1"/><path class="ol" d="M3 9h16v8H3z"/><path class="g" d="M5 11h3v4H5zM9 11h4v4H9zM14 11h3v4h-3zM15 1l7 5-7 5z"/></symbol>
  <symbol id="snd" viewBox="0 0 20 20"><path class="g" d="M2 7h4l5-4v14l-5-4H2z"/><path class="gl th" d="M13 7c1 2 1 4 0 6M15 5c2 3 2 7 0 10M17 4c3 4 3 8 0 12"/></symbol>
  <symbol id="ak" viewBox="0 0 24 24"><path class="gl" d="M4 10C6 2 16 1 19 7M20 14C18 22 8 23 5 17"/><path class="g" d="M21 2v8h-7zM3 22v-8h7z"/><path class="gl th" d="M5 12h14"/><path class="ol" d="M12 6v12"/></symbol>
  <symbol id="run" viewBox="0 0 24 24"><circle class="gl" cx="6" cy="6" r="3.500"/><circle class="o" cx="17" cy="6" r="3"/><path class="ol w3" d="M10 12l5-2 4 4 3-1M14 11l-2 5 5 2v5M12 17l-5 3"/></symbol>
  <symbol id="bmk" viewBox="0 0 20 24"><path class="o" d="M4 3h9v18l-5-5-4 5z"/><path class="kl w4" d="M14 2v10M9 7h10"/><path class="gl" d="M14 2v9M10 7h9"/></symbol>
  <symbol id="scr" viewBox="0 0 20 20"><path class="g" d="M1 1h18v3H1zM1 5h18v14H1z"/><path class="kl th" d="M7 8c-3 0 0 3-2 4 2 1-1 4 2 4M13 8c3 0 0 3 2 4-2 1 1 4-2 4"/><path class="kl" d="M10 9v2M10 13v2"/></symbol>
  <symbol id="ly" viewBox="0 0 18 14"><path class="g" d="M1 8l7-4 7 4-7 4z"/></symbol>
</svg>

<div class="app">
  <header class="titlebar">
    <svg class="logo"><use href="#maya"/></svg>
    <span class="grow title">m1-02-Curve-View-Types_Begin.mb* - Autodesk MAYA 2022 - Educational Version: C:\Users\bb1043834\Desktop\maya-animation-tips\maya_animation_tips\scenes\m1-02-Curve-View-Types_Begin.mb&nbsp;&nbsp; ---&nbsp;&nbsp; ranger_rig_0007:Ranger_ROOTC...</span>
    <button class="wb" aria-label="Minimize"><svg viewBox="0 0 12 12"><path d="M1 6.500h10"/></svg></button>
    <button class="wb" aria-label="Maximize"><svg viewBox="0 0 12 12"><path d="M1.500 1.500h9v9h-9z"/></svg></button>
    <button class="wb" aria-label="Close"><svg viewBox="0 0 12 12"><path d="M1 1l10 10M11 1L1 11"/></svg></button>
  </header>

  <div class="menurow">
    <nav class="menu">
      <button>File</button><button>Edit</button><button>Create</button><button>Select</button><button>Modify</button><button>Display</button><button>Windows</button><button>Key</button><button>Playback</button><button>Audio</button><button>Visualize</button><button>Deform</button><button>Constrain</button><button>MASH</button><button>Cache</button><button>Arnold</button><button>Help</button>
    </nav>
    <label class="workspace">Workspace :
      <span class="sel wide"><select><option>Maya Classic*</option></select></span>
    </label>
    <button class="c23" aria-label="Lock workspace"><svg><use href="#lock"/></svg></button>
  </div>

  <div class="status">
    <span class="grip"></span>
    <span class="sel mode"><select aria-label="Menu set"><option>Animation</option></select></span>
    <svg class="sep"><use href="#sep"/></svg>
    <button class="c23" aria-label="New"><svg><use href="#new"/></svg></button>
    <button class="c23" aria-label="Open"><svg><use href="#open"/></svg></button>
    <button class="c23" aria-label="Save"><svg><use href="#save"/></svg></button>
    <button class="c23" aria-label="Undo"><svg><use href="#undo"/></svg></button>
    <button class="c23" aria-label="Redo"><svg><use href="#redo"/></svg></button>
    <svg class="sep"><use href="#sepa"/></svg>
    <svg class="sep"><use href="#sep"/></svg>
    <button class="c23" aria-label="Select hierarchy"><svg><use href="#selh"/></svg></button>
    <button class="c23 on" aria-label="Select object"><svg><use href="#selo"/></svg></button>
    <button class="c23" aria-label="Select component"><svg><use href="#selc"/></svg></button>
    <svg class="sep"><use href="#sep"/></svg>
    <i class="tri"></i>
    <button class="c23 on" aria-label="Handles"><svg><use href="#plus"/></svg></button>
    <button class="c23 on" aria-label="Joints"><svg><use href="#joint"/></svg></button>
    <button class="c23 on" aria-label="Curves"><svg><use href="#crv"/></svg></button>
    <button class="c23 on" aria-label="Surfaces"><svg><use href="#surf"/></svg></button>
    <button class="c23 on" aria-label="Deformations"><svg><use href="#latt"/></svg></button>
    <button class="c23 on" aria-label="Dynamics"><svg><use href="#dyn"/></svg></button>
    <button class="c23 on" aria-label="Rendering"><svg><use href="#clap"/></svg></button>
    <button class="c23 on" aria-label="Miscellaneous"><svg><use href="#help"/></svg></button>
    <button class="c23" aria-label="Lock selection"><svg><use href="#lock"/></svg></button>
    <button class="c23" aria-label="Highlight selection"><svg><use href="#box"/></svg></button>
    <svg class="sep"><use href="#sep"/></svg>
    <button class="c23" aria-label="Snap to grids"><svg><use href="#mgrid"/></svg></button>
    <button class="c23" aria-label="Snap to curves"><svg><use href="#mcrv"/></svg></button>
    <button class="c23" aria-label="Snap to points"><svg><use href="#mpt"/></svg></button>
    <button class="c23" aria-label="Snap to center"><svg><use href="#mproj"/></svg></button>
    <button class="c23" aria-label="Snap to planes"><svg><use href="#mpl"/></svg></button>
    <button class="c23" aria-label="Make live"><svg><use href="#mag"/></svg></button>
    <i class="tri w16"></i>
    <button class="field">No Live Surface</button>
    <svg class="sep"><use href="#sep"/></svg>
    <i class="tri w16"></i>
    <button class="field">Symmetry: Off</button>
    <svg class="sep"><use href="#sepa"/></svg>
    <svg class="sep"><use href="#sep"/></svg>
    <button class="c23" aria-label="Render view"><svg><use href="#rview"/></svg></button>
    <button class="c23" aria-label="Render"><svg><use href="#film"/></svg></button>
    <button class="c23" aria-label="IPR render"><svg><use href="#ripr"/></svg></button>
    <button class="c23" aria-label="Render settings"><svg><use href="#rgear"/></svg></button>
    <button class="c23" aria-label="Hypershade"><svg><use href="#hyp"/></svg></button>
    <button class="c23" aria-label="Render setup"><svg><use href="#rset"/></svg></button>
    <button class="c23" aria-label="Light editor"><svg><use href="#rlt"/></svg></button>
    <button class="c23" aria-label="Pause viewport"><svg><use href="#pause"/></svg></button>
    <svg class="sep"><use href="#sepa"/></svg>
    <svg class="sep"><use href="#sep"/></svg>
    <button class="account"><svg><use href="#user"/></svg><span class="grow">Brady Birdwell</span><i class="tri big"></i></button>
    <span class="grow"></span>
    <button class="c23" aria-label="Modeling toolkit"><svg><use href="#modk"/></svg></button>
    <button class="c23" aria-label="HumanIK"><svg><use href="#human"/></svg></button>
    <button class="c23" aria-label="Attribute editor"><svg><use href="#aedit"/></svg></button>
    <button class="c23" aria-label="Tool settings"><svg><use href="#tset"/></svg></button>
    <button class="c23 on" aria-label="Channel box"><svg><use href="#layers"/></svg></button>
  </div>

  <section class="shelf">
    <span class="grip"></span>
    <div class="shelf-side">
      <button aria-label="Shelf menu"><svg viewBox="0 0 12 8"><path fill="#999" d="M1 1h10v2H1zM1 5h10v2H1z"/></svg></button>
      <button aria-label="Shelf options"><svg viewBox="0 0 14 14"><circle fill="none" stroke="#b0b0b0" stroke-width="2" cx="7" cy="7" r="4"/><path stroke="#b0b0b0" stroke-width="2" d="M7 0v2M7 12v2M0 7h2M12 7h2M2 2l2 2M10 10l2 2M12 2l-2 2M4 10l-2 2"/></svg></button>
    </div>
    <div class="grow">
      <div class="tabs">
        <button class="cur">Curves / Surfaces</button><button>Poly Modeling</button><button>Sculpting</button><button>Rigging</button><button>Animation</button><button>Rendering</button><button>FX</button><button>FX Caching</button><button>Custom</button><button>Arnold</button><button>Bifrost</button><button>MASH</button><button>Motion Graphics</button><button>XGen</button><button>TURTLE</button>
      </div>
      <div class="shelf-icons">
        <button aria-label="NURBS circle"><svg><use href="#s-circ"/></svg></button>
        <button aria-label="NURBS square"><svg><use href="#s-sq"/></svg></button>
        <button aria-label="EP curve"><svg><use href="#s-cv"/></svg></button>
        <button aria-label="Pencil curve"><svg><use href="#s-pen"/></svg></button>
        <button aria-label="Three point arc"><svg><use href="#s-arc"/></svg></button>
        <button aria-label="Attach curves"><svg><use href="#s-at"/></svg></button>
        <button aria-label="Detach curves"><svg><use href="#s-det"/></svg></button>
        <button aria-label="Insert knot"><svg><use href="#s-ins"/></svg></button>
        <button aria-label="Extend curve"><svg><use href="#s-ext"/></svg></button>
        <button aria-label="Offset curve"><svg><use href="#s-off"/></svg></button>
        <button aria-label="Rebuild curve"><svg><use href="#s-reb"/></svg></button>
        <button aria-label="Add points"><svg><use href="#s-add"/></svg></button>
        <button aria-label="Cut curve"><svg><use href="#s-cut"/></svg></button>
        <button aria-label="Bezier curve"><svg><use href="#s-bez"/></svg></button>
        <i class="bar"></i>
        <button aria-label="Sphere"><svg><use href="#s-sph"/></svg></button>
        <button aria-label="Cube"><svg><use href="#s-cube"/></svg></button>
        <button aria-label="Cylinder"><svg><use href="#s-cyl"/></svg></button>
        <button aria-label="Cone"><svg><use href="#s-cone"/></svg></button>
        <button aria-label="Plane"><svg><use href="#s-pl"/></svg></button>
        <button aria-label="Torus"><svg><use href="#s-tor"/></svg></button>
        <button aria-label="Revolve"><svg><use href="#s-rev"/></svg></button>
        <button aria-label="Loft"><svg><use href="#s-loft"/></svg></button>
        <button aria-label="Planar"><svg><use href="#s-plan"/></svg></button>
        <button aria-label="Extrude"><svg><use href="#s-extr"/></svg></button>
        <button aria-label="Birail"><svg><use href="#s-bir"/></svg></button>
        <button aria-label="Boundary"><svg><use href="#s-bnd"/></svg></button>
        <button aria-label="Project curve"><svg><use href="#s-prj"/></svg></button>
        <button aria-label="Intersect"><svg><use href="#s-int"/></svg></button>
        <button aria-label="Trim"><svg><use href="#s-trm"/></svg></button>
        <button aria-label="Untrim"><svg><use href="#s-unt"/></svg></button>
        <button aria-label="Attach surfaces"><svg><use href="#s-sat"/></svg></button>
        <button aria-label="Detach surfaces"><svg><use href="#s-sde"/></svg></button>
        <button aria-label="Open or close"><svg><use href="#s-oc"/></svg></button>
        <button aria-label="Insert isoparms"><svg><use href="#s-ext2"/></svg></button>
        <button aria-label="Extend surface"><svg><use href="#s-sins"/></svg></button>
        <button aria-label="Rebuild surface"><svg><use href="#s-strip"/></svg></button>
        <button aria-label="Sculpt surface"><svg><use href="#s-scl"/></svg></button>
        <button aria-label="Surface editing"><svg><use href="#s-sed"/></svg></button>
        <span class="grow"></span>
        <svg class="vs" viewBox="0 0 12 36"><path fill="#333" d="M0 0h12v36H0z"/><path class="g" d="M6 2l5 6H1zM6 33l5-6H1z"/><circle cx="6" cy="18" r="5" fill="#5d5d5d"/></svg>
      </div>
    </div>
  </section>

  <main class="main">
    <aside class="toolbox">
      <i class="hdots"></i>
      <button class="on" aria-label="Select tool"><svg><use href="#t-sel"/></svg></button>
      <button aria-label="Lasso tool"><svg><use href="#t-las"/></svg></button>
      <button aria-label="Paint selection"><svg><use href="#t-pnt"/></svg></button>
      <button aria-label="Move tool"><svg><use href="#t-mov"/></svg></button>
      <button aria-label="Rotate tool"><svg><use href="#t-rot"/></svg></button>
      <button aria-label="Scale tool"><svg><use href="#t-scl"/></svg></button>
      <i class="rule"></i>
      <button class="lay" aria-label="Single pane"><svg><use href="#l-1"/></svg></button>
      <button class="lay" aria-label="Four panes"><svg><use href="#l-2"/></svg></button>
      <button class="lay" aria-label="Two panes"><svg><use href="#l-3"/></svg></button>
      <button class="lay" aria-label="Outliner layout"><svg><use href="#l-4"/></svg></button>
      <span class="grow"></span>
      <svg class="mlogo"><use href="#maya"/></svg>
    </aside>

    <section class="panel">
      <nav class="menu"><button>View</button><button>Shading</button><button>Lighting</button><button>Show</button><button>Renderer</button><button>Panels</button></nav>
      <div class="ptools">
        <svg class="sep"><use href="#sep"/></svg>
        <button aria-label="Select camera"><svg><use href="#p-cam"/></svg></button>
        <button aria-label="Lock camera"><svg><use href="#p-caml"/></svg></button>
        <button aria-label="Camera attributes"><svg><use href="#p-camg"/></svg></button>
        <button aria-label="Bookmarks"><svg><use href="#p-bm"/></svg></button>
        <button aria-label="Image plane"><svg><use href="#p-img"/></svg></button>
        <button aria-label="Pan and zoom"><svg><use href="#p-pz"/></svg></button>
        <button aria-label="Grease pencil"><svg><use href="#p-gp"/></svg></button>
        <svg class="sep"><use href="#sep"/></svg>
        <button class="on" aria-label="Grid"><svg><use href="#p-grid"/></svg></button>
        <button aria-label="Film gate"><svg><use href="#p-fg"/></svg></button>
        <button aria-label="Resolution gate"><svg><use href="#p-rg"/></svg></button>
        <button aria-label="Gate mask"><svg><use href="#p-gm"/></svg></button>
        <button aria-label="Field chart"><svg><use href="#p-fc"/></svg></button>
        <button aria-label="Safe action"><svg><use href="#p-sa"/></svg></button>
        <button aria-label="Safe title"><svg><use href="#p-st"/></svg></button>
        <svg class="sep"><use href="#sep"/></svg>
        <button aria-label="Wireframe"><svg><use href="#p-wf"/></svg></button>
        <button class="on" aria-label="Smooth shade"><svg><use href="#p-sh"/></svg></button>
        <button aria-label="Default material"><svg><use href="#p-half"/></svg></button>
        <button aria-label="Wireframe on shaded"><svg><use href="#p-tx"/></svg></button>
        <button class="on" aria-label="Textured"><svg><use href="#p-chk"/></svg></button>
        <button aria-label="Use all lights"><svg><use href="#p-lt"/></svg></button>
        <button aria-label="Shadows"><svg><use href="#p-shd"/></svg></button>
        <svg class="sep"><use href="#sep"/></svg>
        <button aria-label="Ambient occlusion"><svg><use href="#p-ao"/></svg></button>
        <button aria-label="Motion blur"><svg><use href="#p-mb"/></svg></button>
        <button aria-label="Anti-aliasing"><svg><use href="#p-aa"/></svg></button>
        <button aria-label="Depth of field"><svg><use href="#p-dof"/></svg></button>
        <svg class="sep"><use href="#sep"/></svg>
        <button aria-label="Isolate select"><svg><use href="#p-iso"/></svg></button>
        <svg class="sep"><use href="#sep"/></svg>
        <button aria-label="X-ray"><svg><use href="#p-c1"/></svg></button>
        <button aria-label="X-ray components"><svg><use href="#p-c2"/></svg></button>
        <button aria-label="X-ray joints"><svg><use href="#p-c3"/></svg></button>
        <svg class="sep"><use href="#sep"/></svg>
        <button aria-label="Exposure"><svg><use href="#p-ap"/></svg></button>
        <input class="num" aria-label="Exposure value" value="0.00">
        <button class="wide24" aria-label="Gamma"><svg><use href="#p-con"/></svg></button>
        <input class="num" aria-label="Gamma value" value="1.00">
        <button class="on onbtn" aria-label="Color management"><b>ON</b></button>
        <span class="sel cm"><select aria-label="View transform"><option>sRGB gamma (legacy)</option></select></span>
      </div>

      <div class="viewport">
        <svg class="scene" viewBox="51 200 1577 813" preserveAspectRatio="xMidYMax slice">
          <g id="grid"></g>
          <g transform="translate(500 770) scale(.574 .3333)" class="nss">
            <g stroke="#00ff00" fill="none">
              <path d="M192 728L286 502 331 550 368 534C355 480 375 400 438 341L417 321 348 349 455 225 545 220"/>
              <path d="M606 216L670 214 610 241 634 258C720 250 800 250 905 284L929 272 881 236 1097 289 1159 434 1098 393 1070 408C1115 480 1115 550 1072 616L1106 644 1170 606 1134 728"/>
              <ellipse cx="734" cy="497" rx="346" ry="233"/>
              <path d="M484 730L478 718 518 697 600 730"/>
            </g>
            <path fill="url(#skin)" d="M546 60L643 60 635 130 622 165 605 220 592 290 587 360 592 400 584 430C560 445 520 430 484 415L485 398 510 370 527 300 545 240 555 210 553 140z"/>
            <path fill="#252324" d="M546 60L645 60 638 110 630 140C600 150 590 125 585 105L572 100 562 125 568 170 558 215 553 140z"/>
            <path fill="#303643" opacity=".7" d="M590 105L636 110 628 140 604 140z"/>
            <path fill="#a06a48" d="M484 400L512 362 585 372 592 405 580 428C550 440 515 420 484 416z"/>
            <path fill="none" stroke="#b8845f" d="M484 405C520 395 560 400 583 372M490 415L560 432"/>
            <path fill="url(#boot)" d="M484 416C520 420 550 440 582 426L588 440 585 487 540 530 505 549 470 540 434 514 440 490 465 450z"/>
            <path fill="#463438" opacity=".9" d="M434 508L470 525 500 530 495 549 470 542 434 516zM550 470L585 432 588 480 545 522z"/>
            <path fill="#a98270" opacity=".4" d="M465 465C480 440 505 440 512 470 505 500 470 500 450 490z"/>
            <g stroke="#0000f0" fill="none">
              <path d="M402 433C470 470 510 500 508 525 505 550 470 562 435 560 400 552 385 530 392 518L438 503"/>
              <path d="M402 433C415 470 408 480 390 518 370 545 385 575 420 586 480 598 520 580 530 560 545 520 550 500 570 490L600 493C608 480 605 465 590 460"/>
              <path d="M588 315L603 293 605 315 620 300 623 318 606 330 600 350 598 325 588 315 610 310 620 320 595 325z"/>
              <path d="M531 60L552 98 557 92 548 85 610 60M568 86L600 84 585 113zM568 86L590 105"/>
            </g>
            <path fill="#b98a6e" d="M1034 60L1076 60 1066 100 1048 98z"/><path fill="#5b3f38" d="M1046 95L1070 95 1078 66 1080 66 1070 108 1052 106z"/>
            <g stroke="#ff0000" fill="none">
              <path d="M1012 60C996 90 1000 150 1036 160 1060 150 1070 110 1081 102 1092 130 1090 165 1075 172 1050 175 1030 120 1024 60M1010 66C1020 130 1050 185 1076 188 1104 180 1110 110 1100 60"/>
            </g>
          </g>
          <path stroke="#00ff00" d="M76.500 974v13"/><path stroke="#0000ff" stroke-width="2" d="M66 988h9"/><path stroke="#ff0000" stroke-width="2" d="M78 987l6 2"/>
          <g class="ax"><text x="73" y="970" fill="#00ff00">y</text><text x="61" y="988" fill="#0000ff">z</text><text x="82" y="989" fill="#ff0000">x</text></g>
          <text class="persp" x="817" y="1004">persp</text>
        </svg>
        <dl class="hud">
          <dt>Backfaces:</dt><dd>N/A</dd>
          <dt></dt><dd>N/A</dd>
          <dt></dt><dd>No</dd>
          <dt></dt><dd>ranger_rig_0007:Ranger_ControlsLayer</dd>
          <dt></dt><dd>56.527</dd>
          <dt></dt><dd>1</dd>
        </dl>

        <section class="ge">
          <header class="ge-title">
            <svg class="logo"><use href="#maya"/></svg>
            <span class="grow">Graph Editor</span>
            <button class="wb" aria-label="Minimize"><svg viewBox="0 0 12 12"><path d="M1 6.500h10"/></svg></button>
            <button class="wb" aria-label="Maximize"><svg viewBox="0 0 12 12"><path d="M1.500 1.500h9v9h-9z"/></svg></button>
            <button class="wb" aria-label="Close"><svg viewBox="0 0 12 12"><path d="M1 1l10 10M11 1L1 11"/></svg></button>
          </header>
          <div class="ge-frame">
            <nav class="menu"><button>Edit</button><button>View</button><button>Select</button><button>Curves</button><button>Keys</button><button>Tangents</button><button>List</button><button>Show</button><button>Help</button></nav>
            <div class="ge-tools">
              <button aria-label="Insert keys"><svg><use href="#g-ins"/></svg></button>
              <button aria-label="Move keys"><svg><use href="#g-mov"/></svg></button>
              <button aria-label="Lattice"><svg><use href="#g-lat"/></svg></button>
              <button aria-label="Region"><svg><use href="#g-reg"/></svg></button>
              <button aria-label="Retime"><svg><use href="#g-ret"/></svg></button>
              <i class="vb"></i>
              <label class="stats" for="st1">Stats</label>
              <input id="st1" class="stat" value="1"><input class="stat s2" aria-label="Key value" value="31.818">
              <i class="vb"></i>
              <button aria-label="Frame all"><svg><use href="#g-fa"/></svg></button>
              <button aria-label="Frame playback"><svg><use href="#g-fp"/></svg></button>
              <button aria-label="Center view"><svg><use href="#g-cv"/></svg></button>
              <i class="vb"></i>
              <button class="on" aria-label="Auto tangents"><svg><use href="#g-a"/></svg></button>
              <button class="gr" aria-label="Ease tangents"><svg><use href="#g-e"/></svg></button>
              <button class="gr" aria-label="Mix tangents"><svg><use href="#g-m"/></svg></button>
              <button class="gr" aria-label="Custom tangents"><svg><use href="#g-c"/></svg></button>
              <button aria-label="Spline"><svg><use href="#g-t1"/></svg></button>
              <button aria-label="Clamped"><svg><use href="#g-t2"/></svg></button>
              <button aria-label="Linear"><svg><use href="#g-t3"/></svg></button>
              <button aria-label="Flat"><svg><use href="#g-t4"/></svg></button>
              <button aria-label="Stepped"><svg><use href="#g-t5"/></svg></button>
              <button aria-label="Plateau"><svg><use href="#g-t6"/></svg></button>
              <i class="vb"></i>
              <button aria-label="In tangent"><svg><use href="#g-in"/></svg></button>
              <button aria-label="Out tangent"><svg><use href="#g-out"/></svg></button>
              <i class="vb"></i>
              <button aria-label="Buffer snapshot"><svg><use href="#g-b1"/></svg></button>
              <button aria-label="Swap buffer"><svg><use href="#g-b2"/></svg></button>
              <i class="vb"></i>
              <button aria-label="Break tangents"><svg><use href="#g-bt"/></svg></button>
              <button class="on" aria-label="Unify tangents"><svg><use href="#g-ut"/></svg></button>
              <button class="on" aria-label="Free weight"><svg><use href="#g-fw"/></svg></button>
              <button aria-label="Lock weight"><svg><use href="#g-lk"/></svg></button>
              <i class="vb"></i>
              <i class="sliver"></i>
              <button aria-label="Pan"><svg><use href="#g-pan"/></svg></button>
              <button aria-label="Dope sheet"><svg><use href="#g-w1"/></svg></button>
              <button aria-label="Trax editor"><svg><use href="#g-w2"/></svg></button>
              <button aria-label="Time editor"><svg><use href="#g-w3"/></svg></button>
            </div>
            <div class="ge-body">
              <div class="outl">
                <div class="search"><svg class="xi"><use href="#g-x"/></svg><span class="sbox"><input aria-label="Search" placeholder="Search..."><i class="tri big"></i></span></div>
                <div class="treewrap">
                  <ul class="tree">
                    <li class="root"><svg viewBox="0 0 50 20"><path d="M7 10h5" stroke="#7d8991"/><circle cx="9.500" cy="10" r="4" fill="none" stroke="#8a8f94"/><path d="M21.500 5.500h8v8h-8zM23 9.500h5M25.500 7v5" fill="none" stroke="#8a8f94"/><path d="M41 2c10 2-4 7-2 10 5 1 5 4-1 6" fill="none" stroke="#222" stroke-width="4"/><path d="M41 2c10 2-4 7-2 10 5 1 5 4-1 6" fill="none" stroke="#58a9d4" stroke-width="2"/></svg><span>ranger_rig_0007:Ranger_ROOTC</span></li>
                    <li class="cr"><svg><use href="#pin"/></svg><i></i>Translate X</li>
                    <li class="cg"><svg><use href="#pin"/></svg><i></i>Translate Y</li>
                    <li class="cb"><svg><use href="#pin"/></svg><i></i>Translate Z</li>
                    <li class="cr"><svg><use href="#pin"/></svg><i class="dot"></i>Rotate X</li>
                    <li class="cg"><svg><use href="#pin"/></svg><i></i>Rotate Y</li>
                    <li class="cb"><svg><use href="#pin"/></svg><i></i>Rotate Z</li>
                  </ul>
                  <div class="vscroll"><i class="up"></i><i class="thumb"></i><i class="down"></i></div>
                </div>
                <div class="hscroll"><i class="lf"></i><i class="thumb"></i><span class="grow"></span><i class="rt"></i></div>
                <i class="hdots short"></i>
              </div>
              <i class="vdots"></i>
              <svg class="graph" viewBox="0 0 795 484" preserveAspectRatio="none">
                <path fill="#404040" d="M0 0h795v484H0z"/>
                <path fill="#353535" d="M0 0h66v484H0zM681 0h114v484H681z"/>
                <path fill="#2f2f2f" d="M0 0h795v25H0z"/>
                <path stroke="#5c5c5c" d="M114.500 0v484M161.500 0v484M208.500 0v484M256.500 0v484M303.500 0v484M350.500 0v484M397.500 0v484M445.500 0v484M492.500 0v484M539.500 0v484M587.500 0v484M634.500 0v484M681.500 0v484"/>
                <path stroke="#4a4a4a" d="M728.500 0v484M776.500 0v484"/>
                <path stroke="#555" stroke-width="2" d="M19 0v484"/>
                <path stroke="#252525" stroke-width="2" d="M0 25.500h795"/>
                <g class="curves" marker-start="url(#key)" marker-mid="url(#key)" marker-end="url(#key)">
                  <path stroke="#ff2222" d="M66 129C98 129 130 101 161 101 271 101 381 152 492 152 571 152 650 129 728 129"/>
                  <path stroke="#38b838" d="M66 160C129 160 193 208 256 208 303 208 350 157 397 157 460 157 524 208 587 208 634 208 681 160 728 160"/>
                  <path stroke="#4a88f0" d="M66 213C176 213 287 264 397 264 429 264 461 245 492 237 539 227 587 221 634 217 666 214 697 213 728 213"/>
                  <path stroke="#ff2222" d="M66 269C98 269 130 320 161 320 240 320 318 269 397 269 429 269 461 320 492 320 571 320 650 269 728 269"/>
                  <path stroke="#38b838" d="M66 350.500H161 303 397 492 634 728"/>
                  <path stroke="#4a88f0" d="M66 406.500H161 303 397 492 634 728"/>
                </g>
                <path fill="#303030" opacity=".35" d="M724 124h9v286h-9z"/>
                <path stroke="#8a8a8a" d="M37 269.500h56"/><path fill="#404040" stroke="#a0a0a0" d="M32.500 267.500h4v4h-4zM95.500 267.500h4v4h-4z"/>
                <path stroke="#e8e000" d="M66.500 20v464"/>
                <path fill="#f5f5c0" d="M63 266h7v7h-7z"/><path fill="#8a8a20" d="M65 268h3v3h-3z"/>
                <path fill="#ffff00" d="M53 0h26v14L66 24 53 14z"/>
                <path fill="#000" d="M681 0h16v14h-5l-11 10z"/>
                <g class="rn">
                  <text x="21" y="9">0</text><text x="117" y="9">2</text><text x="164" y="9">3</text><text x="211" y="9">4</text><text x="258" y="9">5</text><text x="305" y="9">6</text><text x="353" y="9">7</text><text x="400" y="9">8</text><text x="447" y="9">9</text><text x="494" y="9">10</text><text x="541" y="9">11</text><text x="589" y="9">12</text><text x="636" y="9">13</text><text x="685" y="9" fill="#fff">14</text><text x="730" y="9">15</text><text x="778" y="9">16</text>
                  <text x="57" y="9" fill="#fff">1</text><text x="64" y="10" fill="#222">1</text>
                </g>
              </svg>
            </div>
          </div>
        </section>
      </div>
    </section>

    <section class="channel">
      <div class="cb-icons">
        <svg viewBox="0 0 16 16"><path fill="#6cb33f" d="M8 0l3 5H5z"/><path fill="#5b8def" d="M2 9l4 5-6 2z"/><path fill="#d9534f" d="M14 9l2 6-6-1z"/><path class="gl" d="M8 6v4M8 10l-3 3M8 10l3 3"/></svg>
        <svg viewBox="0 0 16 16"><path d="M3 14A6 6 0 1 1 13 14" fill="none" stroke="#45aebb" stroke-width="4"/><path class="g" d="M8 7l3 2-3 2z"/></svg>
        <svg viewBox="0 0 16 16"><path class="gl th" d="M1.500 0v14.500H16"/><path class="tl" d="M4 12l9-9"/><path class="t" d="M10 1h5v5z"/></svg>
      </div>
      <nav class="menu"><button>Channels</button><button>Edit</button><button>Object</button><button>Show</button></nav>
      <h2>ranger_rig_0007:Ranger_ROOTC</h2>
      <div class="chans">
        <label for="tx">Translate X</label><input id="tx" value="0.329">
        <label for="ty">Translate Y</label><input id="ty" value="-0.537">
        <label for="tz">Translate Z</label><input id="tz" value="1.57">
        <label for="rx">Rotate X</label><input id="rx" value="31.818">
        <label for="ry">Rotate Y</label><input id="ry" value="0">
        <label for="rz">Rotate Z</label><input id="rz" value="0">
      </div>
      <h2>SHAPES</h2>
      <p class="node shape">ranger_rig_0007:Ranger_ROOTCShape</p>
      <h2>INPUTS</h2>
      <p class="node">ranger_rig_0007:Ranger_ControlsLa...</p>
      <div class="void"></div>
      <i class="hdots mid"></i>
      <div class="layers">
        <div class="ltabs"><button class="cur">Display</button><button>Anim</button></div>
        <nav class="menu"><button>Layers</button><button>Options</button><button>Help</button></nav>
        <div class="lbtns">
          <button aria-label="Move layer up"><svg viewBox="0 0 18 14"><use href="#ly" width="18" height="14"/><path class="t" d="M11 2l4 4h-2v6H9V6z"/></svg></button>
          <button aria-label="Move layer down"><svg viewBox="0 0 18 14"><use href="#ly" width="18" height="14"/><path class="t" d="M12 12l4-4h-2V3h-4v5H8z"/></svg></button>
          <button class="gap" aria-label="New layer"><svg viewBox="0 0 18 14"><use href="#ly" width="18" height="14"/><path class="tl" d="M13 0v7M9 3h8"/></svg></button>
          <button aria-label="New layer from selected"><svg viewBox="0 0 18 14"><use href="#ly" width="18" height="14"/><circle class="t" cx="11" cy="4" r="3.500"/></svg></button>
        </div>
        <div class="llist">
          <div class="lrow"><button>V</button><button>P</button><button aria-label="Color"></button><svg viewBox="0 0 16 15"><path fill="none" stroke="#ddd" d="M1 15L15 1M15.500 0v15"/></svg><span>ranger_rig_0007:Ranger_ControlsLayer</span></div>
          <div class="lrow"><button>V</button><button>P</button><button aria-label="Color"></button><svg viewBox="0 0 16 15"><path fill="none" stroke="#ddd" d="M1 15L15 1M15.500 0v15"/></svg><span>ranger_rig_0007:Ranger_JointsLayer</span></div>
          <div class="lrow seld"><button aria-label="Visible"></button><button>P</button><button aria-label="Color"></button><svg viewBox="0 0 16 15"><path fill="#222" d="M0 0h16v15H0z"/><path fill="none" stroke="#ddd" d="M1 15L15 1M15.500 0v15"/></svg><span>sword</span></div>
        </div>
        <div class="hscroll"><i class="lf"></i><i class="thumb long"></i><span class="grow"></span><i class="rt"></i></div>
      </div>
    </section>
    <nav class="vtabs"><button class="cur">Channel Box / Layer Editor</button><button>Modeling Toolkit</button><button>Attribute Editor</button></nav>
  </main>

  <section class="time">
    <span class="grip"></span>
    <div class="slider">
      <div class="frames">
        <div class="k now"><span>1</span><b>1</b></div><div><span>2</span></div><div class="k"><span>3</span></div><div><span>4</span></div><div class="k"><span>5</span></div><div class="k"><span>6</span></div><div><span>7</span></div><div class="k"><span>8</span></div><div><span>9</span></div><div class="k"><span>10</span></div><div><span>11</span></div><div class="k"><span>12</span></div><div class="k"><span>13</span></div><div><span>14</span></div>
      </div>
    </div>
    <input class="fld" aria-label="Current time" value="1">
    <div class="transport">
      <button aria-label="Go to start"><svg><use href="#k1"/></svg></button>
      <button aria-label="Step back"><svg><use href="#k2"/></svg></button>
      <button aria-label="Previous key"><svg><use href="#k3"/></svg></button>
      <button aria-label="Play backwards"><svg><use href="#k4"/></svg></button>
      <button class="flip" aria-label="Play"><svg><use href="#k4"/></svg></button>
      <button class="flip" aria-label="Next key"><svg><use href="#k3"/></svg></button>
      <button class="flip" aria-label="Step forward"><svg><use href="#k2"/></svg></button>
      <button class="flip" aria-label="Go to end"><svg><use href="#k1"/></svg></button>
    </div>
  </section>

  <section class="range">
    <span class="grip"></span>
    <input class="rv" aria-label="Animation start" value="1">
    <input class="rv" aria-label="Playback start" value="1">
    <div class="track"><i></i><span class="grow">1</span><span>14</span><i></i></div>
    <input class="rv" aria-label="Playback end" value="14">
    <input class="rv" aria-label="Animation end" value="14">
    <svg class="sep n"><use href="#sep"/></svg>
    <button class="c28" aria-label="Bookmark"><svg><use href="#bmk"/></svg></button>
    <svg class="sep n"><use href="#sep"/></svg>
    <i class="tri w28"></i><button class="field">No Character Set</button>
    <i class="tri w28"></i><button class="field">No Anim Layer</button>
    <svg class="sep"><use href="#sep"/></svg>
    <span class="sel fps"><select aria-label="Frame rate"><option>24 fps</option></select></span>
    <button class="c40" aria-label="Loop"><svg><use href="#loop"/></svg></button>
    <button class="c23 on" aria-label="Cached playback"><svg><use href="#pb"/></svg></button>
    <svg class="sep"><use href="#sep"/></svg>
    <button class="c23" aria-label="Sound"><svg><use href="#snd"/></svg></button>
    <button class="c23 red" aria-label="Auto key"><svg><use href="#ak"/></svg></button>
    <button class="c28" aria-label="Preferences"><svg><use href="#run"/></svg></button>
  </section>

  <section class="cmd">
    <span class="grip"></span>
    <label for="mel">MEL</label>
    <input id="mel" value="">
    <output>// Result: 1</output>
    <button aria-label="Script editor"><svg><use href="#scr"/></svg></button>
  </section>

  <footer class="helpline"><span class="grip"></span><span class="grow">Select Tool: select an object</span><svg class="rz" viewBox="0 0 14 14"><path class="gl th" d="M1 13L13 1M5 13l8-8M9 13l4-4"/></svg></footer>
</div>
<script src="grid.js"></script>
</body>
</html>
```
FILE: grid.js
```js
// Projects the ground plane: far corner, left corner and right corner with their depth weights.
const far = [957.5, 799, 1], left = [521, 900, 0.8], right = [1356.5, 954, 0.735];
const N = 24;
function project(u, v) {
  const w = (1 - u - v) * far[2] + u * left[2] + v * right[2];
  const c = i => ((1 - u - v) * far[2] * far[i] + u * left[2] * left[i] + v * right[2] * right[i]) / w;
  return c(0).toFixed(1) + ' ' + c(1).toFixed(1);
}
const grid = document.getElementById('grid');
for (let i = 0; i <= N; i++) {
  const t = i / N;
  const line = document.createElementNS('http://www.w3.org/2000/svg', 'path');
  line.setAttribute('d', 'M' + project(t, 0) + 'L' + project(t, 1) + 'M' + project(0, t) + 'L' + project(1, t));
  if (i === N / 2) line.setAttribute('class', 'axis');
  grid.appendChild(line);
}
```
FILE: styles.css
```css
*{box-sizing:border-box}
html,body{margin:0;height:100%}
body{font:11px/15px "Open Sans","Noto Sans",sans-serif;color:#c8c8c8;background:#444}
button,input,select{font:inherit;color:inherit;border:0;padding:0;margin:0;background:none;border-radius:0}
button{display:flex;align-items:center;justify-content:center;flex:none;white-space:nowrap}
svg{display:block;flex:none}
i{display:block;flex:none}
h2,p,ul,dl,dd{margin:0;padding:0}
.sprite{position:absolute;width:0;height:0}
.grow{flex:1;min-width:0;text-align:left}

/* icon inks */
.g{fill:#c0c0c0}.t{fill:#45aebb}.b{fill:#56a6d1}.o{fill:#e6703a}.k{fill:#444}.dark{fill:#2b3c46}
.gl{fill:none;stroke:#c0c0c0;stroke-width:2}
.tl{fill:none;stroke:#45aebb;stroke-width:2}
.bl{fill:none;stroke:#56a6d1;stroke-width:2}
.ol{fill:none;stroke:#e6703a;stroke-width:2}
.kl{fill:none;stroke:#444;stroke-width:2}
.pt{fill:#444;stroke:#56a6d1;stroke-width:1}
.pg{fill:#444;stroke:#d0d0d0;stroke-width:1}
.po{fill:#444;stroke:#e6703a;stroke-width:2}
.th{stroke-width:1}.w3{stroke-width:3}.w4{stroke-width:4}
.kf{fill:#444}.dkf{fill:#2b4350}
.on{background:#5285a6}
.red{background:#cf2f36}

.app{display:flex;flex-direction:column;min-height:100vh;border:1px solid #1c6fae;border-top:2px solid #0a6fd0;border-right-color:#0a3ca8}
.titlebar{display:flex;align-items:center;height:30px;background:#fff;color:#8c8c8c;padding-left:8px}
.title{font-family:"Noto Sans","Open Sans",sans-serif;font-variant-ligatures:none;white-space:nowrap;overflow:hidden}
.logo{width:16px;height:16px;margin-right:6px;background:#d5e8e9}
.wb{width:46px;height:30px}
.wb svg{width:12px;height:12px;fill:none;stroke:currentColor}

.menu{display:flex;align-items:center;gap:15px}
.menurow{display:flex;height:26px;padding:0 4px 0 9px;align-items:flex-start}
.menurow .menu{flex:1;height:20px}
.workspace{display:flex;align-items:center;gap:7px;color:#aaa;padding-top:3px;margin-right:3px}
.menurow .c23{margin-top:2px}
.sel{position:relative;display:block;height:20px;background:#5d5d5d;border-radius:2px}
.sel select{appearance:none;width:100%;height:100%;padding:0 22px 0 3px;outline:0}
.sel::after{content:"";position:absolute;right:5px;top:7px;border:5px solid transparent;border-top:6px solid #c8c8c8;border-bottom:0}
.sel::before{content:"";position:absolute;right:19px;top:0;bottom:0;width:1px;background:#4c4c4c}
.workspace .sel{color:#c8c8c8}
.wide{width:192px}
.mode{width:98px;margin-left:6px}
.cm{width:216px;height:18px;margin-left:3px}
.fps{width:95px}

.grip{width:5px;align-self:stretch;margin:4px 0 4px 3px;background:radial-gradient(circle,#777 1px,transparent 1px) 0 0/3px 3px;flex:none}
.status{display:flex;align-items:center;height:28px;padding-right:4px}
.sep{width:23px;height:20px}
.c23{width:23px;height:22px}
.c23.on{border-left:1px solid #444;background-clip:padding-box}
.c23 svg,.c28 svg,.c40 svg{width:20px;height:20px}
.c28{width:28px;height:22px}
.c40{width:40px;height:22px}
.tri{width:12px;height:5px;background:#8a8a8a;clip-path:polygon(2px 0,calc(100% - 2px) 0,50% 100%)}
.tri.w16{margin:0 2px}
.tri.w28{margin:0 8px}
.tri.big{width:14px;height:6px;background:#e0e0e0}
.field{width:100px;height:22px;border:1px solid #525252;border-radius:2px;justify-content:flex-start;padding-left:5px}
.status .field{margin-right:1px}
.account{width:120px;height:22px;background:#5d5d5d;border-radius:2px;padding:0 3px;gap:3px;color:#e8e8e8}
.account svg{width:16px;height:20px}

.shelf{display:flex;height:72px;border-top:2px solid #373737;border-bottom:2px solid #373737;padding-top:2px}
.shelf-side{display:flex;flex-direction:column;justify-content:space-around;align-items:center;width:20px;height:62px;background:#373737;margin:0 3px 0 6px}
.shelf-side svg{width:11px;height:11px}
.tabs{display:flex;gap:1px;height:20px;background:#373737;padding-top:2px}
.tabs button{padding:0 11px;background:#3d3d3d;border:1px solid #333;border-bottom:0;border-radius:3px 3px 0 0;color:#b8b8b8}
.tabs .cur{background:#444;border-color:#444;color:#d0d0d0;padding:0 10px}
.shelf-icons{display:flex;align-items:center;height:40px;padding:0 8px 0 4px}
.shelf-icons button{width:35px;height:32px}
.shelf-icons button svg{width:28px;height:28px}
.bar{width:2px;height:36px;margin:0 5px;background:#9a9a9a}
.vs{width:12px;height:36px}

.main{flex:1;display:flex;min-height:0;border-bottom:2px solid #373737}
.toolbox{width:46px;display:flex;flex-direction:column;align-items:center;gap:1px;border-right:2px solid #373737;padding:3px 0 6px}
.hdots{width:38px;height:6px;background:radial-gradient(circle,#777 1px,transparent 1px) 0 0/3px 3px}
.toolbox .hdots{margin-bottom:2px}
.toolbox button{width:36px;height:36px}
.toolbox button svg{width:36px;height:36px}
.rule{width:36px;height:2px;background:#999;margin:77px 0 4px}
.toolbox .lay svg{width:28px;height:28px}
.mlogo{width:32px;height:32px}

.panel{flex:1;min-width:0;display:flex;flex-direction:column;padding:3px 5px 4px 4px;border-right:2px solid #373737}
.panel>.menu{height:18px;padding-left:8px;gap:16px}
.ptools{display:flex;align-items:center;height:21px;padding-bottom:1px}
.ptools .sep{width:11px;height:16px}
.ptools button{width:19px;height:18px}
.ptools button svg{width:18px;height:18px}
.ptools .wide24{width:24px}
.num{width:37px;height:15px;background:#2b2b2b;border-radius:2px;padding-left:5px}
.onbtn b{font:700 7px/13px "Open Sans",sans-serif;width:15px;height:15px;border-radius:50%;background:#45b4c4;color:#234;border:1px solid #1f4a55}
.ptools .onbtn{margin-left:3px}
.viewport{position:relative;flex:1;overflow:hidden;background:#5d5d5d;min-height:600px}
.scene{position:absolute;inset:0;width:100%;height:100%}
#grid path{stroke:#444;stroke-width:1;fill:none;shape-rendering:crispEdges}
#grid .axis{stroke:#3c3c3c;stroke-width:2}
.nss *{vector-effect:non-scaling-stroke}
.nss g{shape-rendering:crispEdges}
.ax{font:700 11px "Liberation Sans",sans-serif}
.persp{font:700 10px "Open Sans",sans-serif;fill:#fff}
.hud{position:absolute;left:1211px;top:-3px;display:grid;grid-template-columns:136px auto;grid-auto-rows:20px;align-items:center;font:700 10px "Liberation Sans",Arial,sans-serif;color:#fff}

.ge{position:absolute;left:328px;top:23px;width:1017px;border:1px solid #3a3a3a;background:#444;box-shadow:0 4px 12px 2px rgba(0,0,0,.5)}
.ge-title{display:flex;align-items:center;height:31px;background:#fff;color:#111;padding-left:8px}
.ge-frame{margin:1px 2px 2px 1px;border:1px solid #7e7e7e}
.ge-frame .menu{height:20px;padding-left:8px}
.ge-tools{display:flex;align-items:flex-start;height:26px;padding-left:2px}
.ge-tools button{width:25px;height:24px}
.ge-tools button svg{width:24px;height:24px}
.ge-tools .on,.gr{border-right:1px solid #444;background-clip:padding-box}
.gr{background:linear-gradient(#2f2,#2f2) 0 0/6px 1px no-repeat,linear-gradient(#2f2,#2f2) 0 100%/6px 1px no-repeat,linear-gradient(#2f2,#2f2) 100% 0/6px 1px no-repeat,linear-gradient(#2f2,#2f2) 100% 100%/6px 1px no-repeat,linear-gradient(#2f2,#2f2) 0 0/1px 100% no-repeat,linear-gradient(#2f2,#2f2) 100% 0/1px 100% no-repeat}
[id^="g-"] .ol:not(.w3),[id^="g-"] .gl{stroke-width:1.300}
.vb{width:1px;height:22px;background:#2c2c2c;margin:1px 1px 0}
.stats{padding:4px 6px 0 3px}
.stat{width:88px;height:18px;margin-top:3px;background:#2b2b2b;border-radius:2px;padding-left:5px;font-size:10px}
.stat.s2{width:94px;margin:3px 8px 0 6px}
.sliver{width:6px;height:24px;margin-right:2px;background:#e6703a;border-left:4px solid #5285a6}
.ge-body{display:flex;height:485px}
.outl{width:207px;display:flex;flex-direction:column}
.search{display:flex;align-items:center;height:36px;padding-bottom:4px}
.xi{width:18px;height:18px;margin:0 6px 0 5px}
.sbox{flex:1;display:flex;align-items:center;height:18px;background:#2b2b2b;border-radius:2px;padding-right:2px;margin-right:2px}
.sbox input{flex:1;min-width:0;padding-left:3px;outline:0}
.sbox input::placeholder{color:#8c8c8c;opacity:1}
.treewrap{flex:1;display:flex;min-height:0;padding:0 1px 0 2px}
.tree{flex:1;min-width:0;list-style:none;background:#373737}
.tree li{display:flex;align-items:center;height:20px;font:italic 9px/20px "Open Sans",sans-serif;padding-left:32px}
.tree li svg{width:14px;height:9px}
.tree li i{width:7px;height:7px;margin:0 6px 0 23px}
.tree .dot{background:#f22;outline:1px solid #ccc;outline-offset:-1px}
.tree .root{background:#5285a6;color:#fff;font:11px/20px "Open Sans",sans-serif;padding:0;overflow:hidden;white-space:nowrap}
.tree .root svg{width:50px;height:20px;margin-right:4px}
.tree .root span{flex:none}
.cr{color:#f02a2a}.cg{color:#32c032}.cb{color:#4a88ff}
.vscroll{width:13px;display:flex;flex-direction:column;align-items:center;padding-left:1px;background:#373737}
.vscroll .thumb{flex:1;width:10px;border-radius:4px;background:#5d5d5d;margin:3px 0}
.up,.down{width:10px;height:6px;background:#c0c0c0;clip-path:polygon(50% 0,100% 100%,0 100%);margin-top:2px}
.down{clip-path:polygon(0 0,100% 0,50% 100%);margin:0 0 5px}
.hscroll{display:flex;align-items:center;height:12px;padding:0 4px;background:#383838}
.lf,.rt{width:6px;height:9px;background:#c0c0c0;clip-path:polygon(0 50%,100% 0,100% 100%)}
.rt{clip-path:polygon(0 0,100% 50%,0 100%)}
.outl .hscroll{padding-right:16px;margin:0 1px 0 2px}
.hscroll .thumb{width:141px;height:10px;border-radius:4px;background:#5d5d5d;margin-left:4px}
.hscroll .thumb.long{width:161px}
.hdots.short{width:66px;height:3px;margin:2px 0 4px 70px}
.vdots{width:7px;margin:161px 0 161px;background:radial-gradient(circle,#777 1px,transparent 1px) 2px 0/3px 3px repeat-y}
.graph{flex:1;min-width:0;height:484px}
.curves{fill:none}
.rn{font:9px "Open Sans",sans-serif;fill:#a0a0a0}

.channel{width:268px;display:flex;flex-direction:column;padding:4px 3px 5px 5px}
.cb-icons{display:flex;gap:5px;justify-content:flex-end;height:20px;padding-right:5px}
.cb-icons svg{width:15px;height:15px}
.channel>.menu{height:18px;padding:0 7px}
.channel h2{font:700 13px/16px "Open Sans",sans-serif;padding-left:1px;color:#c0c0c0;white-space:nowrap}
.channel>.menu+h2{line-height:17px;margin-top:1px}
.chans{display:grid;grid-template-columns:1fr 74px;grid-auto-rows:16px;column-gap:6px;padding-right:2px}
.chans label{text-align:right;line-height:16px;color:#b8b8b8}
.chans input{width:74px;height:16px;background:#2b2b2b;border-left:7px solid #cc2a2a;border-bottom:1px solid #444;border-radius:0 3px 3px 0;padding-left:1px;color:#d0d0d0}
.node{font:700 13px/16px "Open Sans",sans-serif;padding-left:12px;color:#c0c0c0;white-space:nowrap;overflow:hidden}
.shape{background:#373737}
.void{height:232px;background:#2b2b2b;margin-top:15px}
.hdots.mid{width:88px;height:3px;margin:2px auto 7px}
.layers{flex:1;display:flex;flex-direction:column;border:1px solid #2f2f2f}
.ltabs{display:flex;gap:2px;background:#393939;height:17px;padding-top:1px}
.ltabs button{padding:0 10px;border:1px solid #2f2f2f;border-bottom:0;border-radius:3px 3px 0 0;color:#888}
.ltabs .cur{background:#444;border-color:#444;color:#eee;padding:0 9px}
.layers .menu{height:22px;padding-left:9px}
.lbtns{display:flex;justify-content:flex-end;gap:5px;height:25px;padding:0 6px 3px 0}
.lbtns svg{width:18px;height:14px}
.lbtns .gap{margin-left:4px}
.llist{flex:1;background:#2b2b2b;margin:0 3px;padding:1px 0}
.lrow{display:flex;align-items:center;gap:3px;height:20px;padding-left:3px;color:#fff;overflow:hidden;white-space:nowrap}
.lrow button{width:20px;height:14px;border:1px solid #1d1d1d;border-radius:3px}
.lrow svg{width:16px;height:15px}
.seld{background:#5285a6;color:#111}
.seld button{border-color:#345a73;color:#345a73}
.layers .hscroll{margin:0 3px 3px}
.vtabs{width:17px;background:#373737;display:flex;flex-direction:column;gap:2px;padding-top:1px}
.vtabs button{writing-mode:vertical-rl;width:15px;padding:10px 0;border:1px solid #2f2f2f;color:#8a8a8a}
.vtabs .cur{background:#444;border-color:#444;color:#e8e8e8}

.time{display:flex;align-items:center;height:45px;border-bottom:2px solid #373737}
.slider{flex:1;height:35px;background:#2b2b2b;margin:0 7px 0 5px;padding:0 8px 0 6px}
.frames{display:grid;grid-template-columns:repeat(14,1fr);height:35px;border-bottom:3px solid #5285a6;border-right:1px solid red}
.frames div{position:relative;padding-left:23px;color:#777;line-height:12px}
.frames div::before{content:"";position:absolute;left:0;top:14px;bottom:3px;width:2px;background:#888}
.frames .k::before{top:0;bottom:3px;width:1px;background:red}
.frames span,.frames b{display:block}
.frames b{color:#fff;font-weight:600;line-height:20px}
.frames .now{background:#5d5d5d;color:#909090}
.fld{width:88px;height:18px;margin-bottom:5px;background:#2b2b2b;border-radius:2px;padding-left:5px}
.transport{display:flex;padding:0 11px 0 6px;margin-bottom:7px}
.transport button{width:23px;height:22px}
.transport svg{width:18px;height:18px}
.flip svg{transform:scaleX(-1)}
.range{display:flex;align-items:center;height:37px;border-bottom:2px solid #373737;padding:0 8px 1px 0}
.rv{width:88px;height:25px;background:#2b2b2b;border-radius:2px;padding-left:5px;margin:0 2px 0 6px}
.track{flex:1;display:flex;align-items:center;gap:4px;height:25px;background:#5d5d5d;border:solid #383838;border-width:2px 5px;padding:0 3px;margin:0 2px 0 5px}
.track i{width:15px;height:14px;border-radius:4px;background:#8f8f8f}
.range .sep.n{width:11px}
.range .field{width:103px;height:25px}
.range .red{margin:0 3px}
.cmd{display:flex;align-items:center;height:34px;border-bottom:2px solid #373737;padding-right:9px}
.cmd label{padding:0 14px 0 16px;color:#e0e0e0}
.cmd input{flex:740;height:22px;background:#2b2b2b;border-radius:2px;min-width:0}
.cmd output{flex:1070;height:24px;line-height:24px;background:#2b2b2b;margin:0 6px 0 8px;padding-left:6px}
.cmd svg{width:18px;height:18px}
.helpline{display:flex;align-items:center;height:24px;font-size:9px;color:#b0b0b0;padding-right:1px}
.helpline .grow{padding-left:16px}
.rz{width:14px;height:14px;align-self:flex-end}
```
